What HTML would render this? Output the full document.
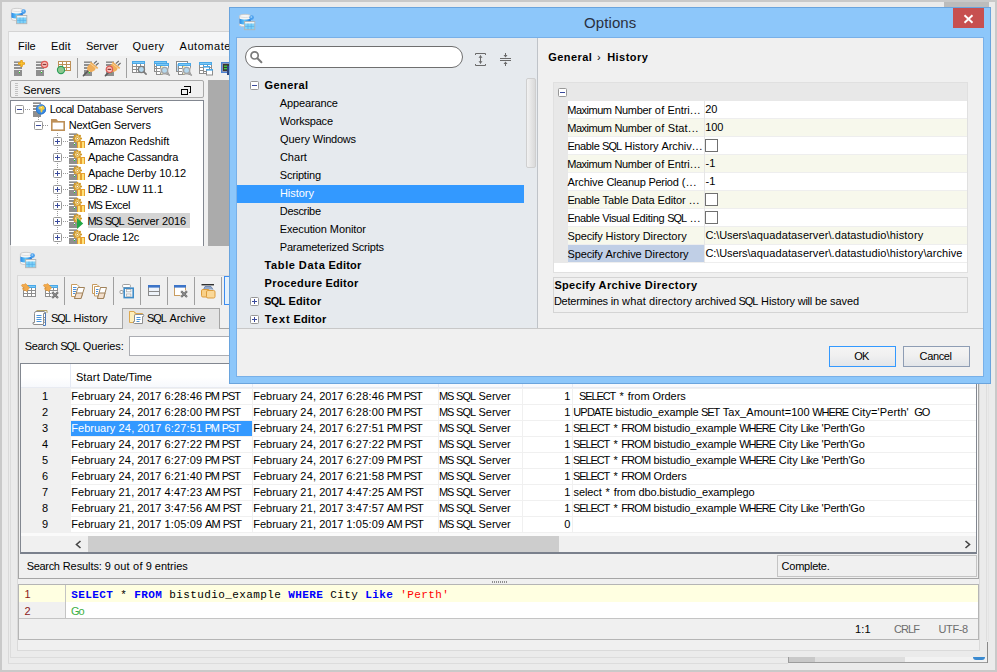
<!DOCTYPE html>
<html lang="en"><head><meta charset="utf-8"><title>Options</title>
<style>
html,body{margin:0;padding:0;background:#ebebeb}
body{width:997px;height:672px;overflow:hidden;position:relative;font-family:"Liberation Sans",sans-serif;font-size:11px;color:#000}
#r{position:absolute;left:0;top:0;width:997px;height:672px;overflow:hidden}
#r div,#r span,#r svg{position:absolute;display:block}
#r svg{overflow:visible}
#r span{white-space:pre;line-height:16px;font-size:11px;letter-spacing:-0.06px}
#r span i{position:static;display:inline}
#r span.b{font-weight:bold;font-size:11px;letter-spacing:-0.06px}
#r span.m{font-family:"Liberation Mono",monospace;font-size:11px;letter-spacing:0.4px}
#r span i{font-style:normal}
</style></head>
<body><div id="r">
<div style="left:0px;top:0px;width:997px;height:672px;background:#ebebeb"></div>
<div style="left:0px;top:0px;width:997px;height:2px;background:#c9c9c9"></div>
<div style="left:0px;top:0px;width:2px;height:672px;background:#c9c9c9"></div>
<div style="left:995px;top:0px;width:2px;height:672px;background:#c9c9c9"></div>
<div style="left:0px;top:670px;width:997px;height:2px;background:#c9c9c9"></div>
<div style="left:944px;top:2px;width:45px;height:6px;background:#bcbcbc"></div>
<svg style="left:11px;top:8px;" width="16" height="16" viewBox="0 0 16 16"><defs><linearGradient id="gA" x1="0" x2="1"><stop offset="0" stop-color="#2d8ae6"/><stop offset=".45" stop-color="#62c8fa"/><stop offset="1" stop-color="#1c74da"/></linearGradient></defs><path d="M.4 2C.4 -.2 11.8 -.2 11.8 2V11C11.8 13.2 .4 13.2 .4 11Z" fill="#f6f6f6" stroke="#c4c4c4" stroke-width=".8"/><path d="M.4 2C.4 4 11.8 4 11.8 2" fill="none" stroke="#d0d0d0" stroke-width=".6"/><path d="M.4 4.4C3 5.8 9 5.8 11.8 4.4V9.4C9 10.8 3 10.8 .4 9.4Z" fill="url(#gA)"/><circle cx="12.6" cy="3.6" r="2.3" fill="#4a9fee"/><circle cx="12.3" cy="3" r="1" fill="#8fcaf8"/><rect x="5.6" y="7.5" width="10.2" height="8.2" fill="#7fd2f8" stroke="#b4b4b4" stroke-width=".9"/><rect x="6.1" y="8" width="9.2" height="1.5" fill="#f4f4f4"/><path d="M9 9.6V15.2M12.2 9.6V15.2M6.1 12.4H15.3" stroke="#58aee8" stroke-width=".7" fill="none"/></svg>
<div style="left:8px;top:31px;width:222px;height:1px;background:#d4d4d4"></div>
<div style="left:8px;top:31px;width:1px;height:633px;background:#d9d9d9"></div>
<div style="left:9px;top:32px;width:221px;height:24px;background:#f5f6f7"></div>
<span style="left:18px;top:38px;letter-spacing:0.00px;">File</span>
<span style="left:51px;top:38px;letter-spacing:0.20px;">Edit</span>
<span style="left:86px;top:38px;letter-spacing:-0.11px;">Server</span>
<span style="left:132.5px;top:38px;letter-spacing:0.41px;">Query</span>
<span style="left:179.5px;top:38px;letter-spacing:0.55px;">Automate</span>
<div style="left:9px;top:56px;width:221px;height:24px;background:#f0f0f0"></div>
<svg style="left:13px;top:60px;" width="16" height="16" viewBox="0 0 16 16"><g shape-rendering="crispEdges"><rect x="1" y="1" width="8" height="2" fill="#8f8f8f"/><rect x="1" y="1" width="8" height="1" fill="#b4b4b4"/><rect x="1" y="4" width="8" height="2" fill="#8f8f8f"/><rect x="1" y="7" width="8" height="2" fill="#8f8f8f"/><rect x="1" y="10" width="8" height="6" fill="#8f8f8f"/><rect x="6" y="11" width="1" height="1" fill="#f4fff4"/><rect x="6" y="12" width="1" height="1" fill="#22d022"/></g><path d="M7.7 .5H9.3V2.7H11.5V4.3H9.3V6.5H7.7V4.3H5.5V2.7H7.7Z" fill="#fdc830" stroke="#e6a11e" stroke-width="1"/></svg>
<svg style="left:35px;top:60px;" width="16" height="16" viewBox="0 0 16 16"><g shape-rendering="crispEdges"><rect x="1" y="1" width="8" height="2" fill="#8f8f8f"/><rect x="1" y="1" width="8" height="1" fill="#b4b4b4"/><rect x="1" y="4" width="8" height="2" fill="#8f8f8f"/><rect x="1" y="7" width="8" height="2" fill="#8f8f8f"/><rect x="1" y="10" width="8" height="6" fill="#8f8f8f"/><rect x="6" y="11" width="1" height="1" fill="#f4fff4"/><rect x="6" y="12" width="1" height="1" fill="#22d022"/></g><circle cx="9.5" cy="4.5" r="3.2" fill="#f9bdb8" stroke="#dc5a55" stroke-width="1.2"/><rect x="7.7" y="3.9" width="3.6" height="1.2" fill="#8a3a36"/></svg>
<svg style="left:57px;top:60px;" width="16" height="16" viewBox="0 0 16 16"><rect x="1.5" y="1.5" width="12" height="9" fill="#fff" stroke="#bd9058" stroke-width="1"/><path d="M1.5 4.5H13.5M1.5 7.5H13.5M5.5 1.5V10.5M9.5 1.5V10.5" stroke="#bd9058" stroke-width="1" fill="none"/><circle cx="4" cy="10" r="3.6" fill="#8cc68e" stroke="#2a9e58" stroke-width="1.1"/></svg>
<svg style="left:83px;top:60px;" width="16" height="16" viewBox="0 0 16 16"><g shape-rendering="crispEdges"><rect x="1" y="1" width="8" height="2" fill="#8f8f8f"/><rect x="1" y="1" width="8" height="1" fill="#b4b4b4"/><rect x="1" y="4" width="8" height="2" fill="#8f8f8f"/><rect x="1" y="7" width="8" height="2" fill="#8f8f8f"/><rect x="1" y="10" width="8" height="6" fill="#8f8f8f"/><rect x="6" y="11" width="1" height="1" fill="#f4fff4"/><rect x="6" y="12" width="1" height="1" fill="#22d022"/></g><path d="M.4 15.6L5.2 10.8" stroke="#5a5a5a" stroke-width="1.5" stroke-linecap="round"/><path d="M10.8 3.6L13.8 1M12.7 5.5L15.6 3" stroke="#6a6a6a" stroke-width="1.2"/><path d="M7.6 3.4L12.8 7.6Q12.6 10.8 9.2 11.8Q5.6 12.6 4.2 9.6Q3.2 6.2 7.6 3.4Z" fill="#f0ae5a"/><path d="M7.3 2.3L14.7 8.3" stroke="#f0ae5a" stroke-width="1.7"/><path d="M7.2 3.5L13.2 8.4" stroke="#f9dcae" stroke-width=".7"/><rect x="5.8" y="12" width="1.2" height="1.2" fill="#22d022"/></svg>
<svg style="left:105px;top:60px;" width="16" height="16" viewBox="0 0 16 16"><g shape-rendering="crispEdges"><rect x="1" y="1" width="8" height="2" fill="#8f8f8f"/><rect x="1" y="1" width="8" height="1" fill="#b4b4b4"/><rect x="1" y="4" width="8" height="2" fill="#8f8f8f"/><rect x="1" y="7" width="8" height="2" fill="#8f8f8f"/><rect x="1" y="10" width="8" height="6" fill="#8f8f8f"/><rect x="6" y="11" width="1" height="1" fill="#f4fff4"/><rect x="6" y="12" width="1" height="1" fill="#22d022"/></g><path d="M.4 15.6L5.2 10.8" stroke="#5a5a5a" stroke-width="1.5" stroke-linecap="round"/><path d="M10.8 3.6L13.8 1M12.7 5.5L15.6 3" stroke="#6a6a6a" stroke-width="1.2"/><path d="M7.6 3.4L12.8 7.6Q12.6 10.8 9.2 11.8Q5.6 12.6 4.2 9.6Q3.2 6.2 7.6 3.4Z" fill="#f0ae5a"/><path d="M7.3 2.3L14.7 8.3" stroke="#f0ae5a" stroke-width="1.7"/><path d="M7.2 3.5L13.2 8.4" stroke="#f9dcae" stroke-width=".7"/><rect x="5.8" y="12" width="1.2" height="1.2" fill="#22d022"/><circle cx="4.4" cy="9.4" r="3.2" fill="#f9bdb8" stroke="#dc5a55" stroke-width="1.2"/><rect x="2.6000000000000005" y="8.8" width="3.6" height="1.2" fill="#8a3a36"/></svg>
<svg style="left:131px;top:60px;" width="16" height="16" viewBox="0 0 16 16"><g shape-rendering="crispEdges"><rect x="1" y="1" width="13" height="12" fill="#8e8e8e"/><rect x="1" y="1" width="13" height="3" fill="#4aa8e8"/><rect x="2" y="2" width="11" height="1" fill="#7cc8f4"/><rect x="2.00" y="4.00" width="3.00" height="2.00" fill="#fff"/><rect x="6.00" y="4.00" width="3.00" height="2.00" fill="#fff"/><rect x="10.00" y="4.00" width="3.00" height="2.00" fill="#fff"/><rect x="2.00" y="7.00" width="3.00" height="2.00" fill="#fff"/><rect x="6.00" y="7.00" width="3.00" height="2.00" fill="#fff"/><rect x="10.00" y="7.00" width="3.00" height="2.00" fill="#fff"/><rect x="2.00" y="10.00" width="3.00" height="2.00" fill="#fff"/><rect x="6.00" y="10.00" width="3.00" height="2.00" fill="#fff"/><rect x="10.00" y="10.00" width="3.00" height="2.00" fill="#fff"/></g><path d="M12.8 11.9L15.100000000000001 14.2" stroke="#7c7c7c" stroke-width="1.7" stroke-linecap="round"/><circle cx="10.4" cy="9.5" r="3.1" fill="#b4d8ee" stroke="#7c7c7c" stroke-width="1.3"/></svg>
<svg style="left:153px;top:60px;" width="16" height="16" viewBox="0 0 16 16"><g shape-rendering="crispEdges"><rect x="1" y="1" width="13" height="11" fill="#8e8e8e"/><rect x="1" y="1" width="13" height="3" fill="#4aa8e8"/><rect x="2" y="2" width="11" height="1" fill="#7cc8f4"/><rect x="2.00" y="4.00" width="3.00" height="1.67" fill="#fff"/><rect x="6.00" y="4.00" width="3.00" height="1.67" fill="#fff"/><rect x="10.00" y="4.00" width="3.00" height="1.67" fill="#fff"/><rect x="2.00" y="6.67" width="3.00" height="1.67" fill="#fff"/><rect x="6.00" y="6.67" width="3.00" height="1.67" fill="#fff"/><rect x="10.00" y="6.67" width="3.00" height="1.67" fill="#fff"/><rect x="2.00" y="9.33" width="3.00" height="1.67" fill="#fff"/><rect x="6.00" y="9.33" width="3.00" height="1.67" fill="#fff"/><rect x="10.00" y="9.33" width="3.00" height="1.67" fill="#fff"/></g><g shape-rendering="crispEdges"><rect x="3" y="3" width="13" height="12" fill="#8e8e8e"/><rect x="3" y="3" width="13" height="3" fill="#4aa8e8"/><rect x="4" y="4" width="11" height="1" fill="#7cc8f4"/><rect x="4.00" y="6.00" width="3.00" height="2.00" fill="#fff"/><rect x="8.00" y="6.00" width="3.00" height="2.00" fill="#fff"/><rect x="12.00" y="6.00" width="3.00" height="2.00" fill="#fff"/><rect x="4.00" y="9.00" width="3.00" height="2.00" fill="#fff"/><rect x="8.00" y="9.00" width="3.00" height="2.00" fill="#fff"/><rect x="12.00" y="9.00" width="3.00" height="2.00" fill="#fff"/><rect x="4.00" y="12.00" width="3.00" height="2.00" fill="#fff"/><rect x="8.00" y="12.00" width="3.00" height="2.00" fill="#fff"/><rect x="12.00" y="12.00" width="3.00" height="2.00" fill="#fff"/></g><rect x="8" y="6" width="3" height="2" fill="#fbe87a"/><rect x="8" y="13" width="1.2" height="1.2" fill="#fbe87a"/><circle cx="11.6" cy="10.4" r="4.4" fill="#f6f6f6"/><path d="M14.0 12.8L16.3 15.100000000000001" stroke="#a4a4a4" stroke-width="1.7" stroke-linecap="round"/><circle cx="11.6" cy="10.4" r="3.1" fill="#b4d8ee" stroke="#a4a4a4" stroke-width="1.3"/></svg>
<svg style="left:175px;top:60px;" width="16" height="16" viewBox="0 0 16 16"><rect x="1.5" y="1.5" width="11" height="10" fill="#fff" stroke="#8c8c8c" stroke-width="1"/><rect x="2" y="4" width="1.6" height="7" fill="#b4d8f4"/><g shape-rendering="crispEdges"><rect x="3" y="3" width="13" height="12" fill="#8e8e8e"/><rect x="3" y="3" width="13" height="3" fill="#4aa8e8"/><rect x="4" y="4" width="11" height="1" fill="#7cc8f4"/><rect x="4.00" y="6.00" width="3.00" height="2.00" fill="#fff"/><rect x="8.00" y="6.00" width="3.00" height="2.00" fill="#fff"/><rect x="12.00" y="6.00" width="3.00" height="2.00" fill="#fff"/><rect x="4.00" y="9.00" width="3.00" height="2.00" fill="#fff"/><rect x="8.00" y="9.00" width="3.00" height="2.00" fill="#fff"/><rect x="12.00" y="9.00" width="3.00" height="2.00" fill="#fff"/><rect x="4.00" y="12.00" width="3.00" height="2.00" fill="#fff"/><rect x="8.00" y="12.00" width="3.00" height="2.00" fill="#fff"/><rect x="12.00" y="12.00" width="3.00" height="2.00" fill="#fff"/></g><rect x="8" y="6" width="3" height="2" fill="#fbe87a"/><rect x="8" y="13" width="1.2" height="1.2" fill="#fbe87a"/><circle cx="11.6" cy="10.4" r="4.4" fill="#f6f6f6"/><path d="M14.0 12.8L16.3 15.100000000000001" stroke="#a4a4a4" stroke-width="1.7" stroke-linecap="round"/><circle cx="11.6" cy="10.4" r="3.1" fill="#b4d8ee" stroke="#a4a4a4" stroke-width="1.3"/></svg>
<svg style="left:198px;top:60px;" width="16" height="16" viewBox="0 0 16 16"><g shape-rendering="crispEdges"><rect x="1" y="2" width="13" height="12" fill="#8e8e8e"/><rect x="1" y="2" width="13" height="3" fill="#4aa8e8"/><rect x="2" y="3" width="11" height="1" fill="#7cc8f4"/><rect x="2.00" y="5.00" width="3.00" height="2.00" fill="#fff"/><rect x="6.00" y="5.00" width="3.00" height="2.00" fill="#fff"/><rect x="10.00" y="5.00" width="3.00" height="2.00" fill="#fff"/><rect x="2.00" y="8.00" width="3.00" height="2.00" fill="#fff"/><rect x="6.00" y="8.00" width="3.00" height="2.00" fill="#fff"/><rect x="10.00" y="8.00" width="3.00" height="2.00" fill="#fff"/><rect x="2.00" y="11.00" width="3.00" height="2.00" fill="#fff"/><rect x="6.00" y="11.00" width="3.00" height="2.00" fill="#fff"/><rect x="10.00" y="11.00" width="3.00" height="2.00" fill="#fff"/></g><rect x="5.5" y="6.5" width="6" height="5" fill="#fff" stroke="#8c8c8c" stroke-width="1"/><rect x="5" y="6" width="7" height="1.6" fill="#4aa8e8"/><rect x="8.5" y="9.5" width="6" height="5.5" fill="#fff" stroke="#8c8c8c" stroke-width="1"/><rect x="8" y="9" width="7" height="1.6" fill="#4aa8e8"/></svg>
<svg style="left:220px;top:60px;" width="16" height="16" viewBox="0 0 16 16"><rect x="1" y="2" width="14" height="11" fill="#4c82d4"/><rect x="2.2" y="3.2" width="11.6" height="8.6" fill="#9a9aa8"/><rect x="3" y="4" width="10" height="7" fill="#3a3434"/><rect x="4" y="5.6" width="3.4" height="1.3" fill="#3ed23e"/><rect x="4" y="8" width="3.4" height="1.3" fill="#3ed23e"/><rect x="7" y="6" width="8" height="9" fill="#2c4680"/></svg>
<div style="left:77px;top:58px;width:1px;height:20px;background:#a0a0a0"></div>
<div style="left:126px;top:58px;width:1px;height:20px;background:#a0a0a0"></div>
<div style="left:10px;top:80px;width:194px;height:18px;background:#f0f0f0;border:1px solid #a9a9a9;border-radius:2px;box-sizing:border-box"></div>
<div style="left:15px;top:83px;width:3px;height:1px;background:#c2c2c2"></div>
<div style="left:15px;top:85px;width:3px;height:1px;background:#c2c2c2"></div>
<div style="left:15px;top:87px;width:3px;height:1px;background:#c2c2c2"></div>
<div style="left:15px;top:89px;width:3px;height:1px;background:#c2c2c2"></div>
<div style="left:15px;top:91px;width:3px;height:1px;background:#c2c2c2"></div>
<div style="left:15px;top:93px;width:3px;height:1px;background:#c2c2c2"></div>
<div style="left:15px;top:95px;width:3px;height:1px;background:#c2c2c2"></div>
<span style="left:23.3px;top:82px;"><i style="letter-spacing:-0.13px;margin:0 0.06px 0 -0.06px">Servers</i></span>
<svg style="left:180px;top:85px" width="12" height="11" viewBox="0 0 12 11" shape-rendering="crispEdges"><path d="M4 1.5H10.5V7.5H8.5" fill="none" stroke="#000" stroke-width="1"/><rect x="1.5" y="4.5" width="6" height="5" fill="#f0f0f0" stroke="#000" stroke-width="1"/><rect x="1" y="4" width="7" height="1" fill="#000"/></svg>
<div style="left:10px;top:100px;width:194px;height:146px;background:#fff;border:1px solid #828790;border-bottom:none;box-sizing:border-box"></div>
<div style="left:204px;top:80px;width:4px;height:166px;background:#f0f0f0"></div>
<div style="left:208px;top:80px;width:22px;height:166px;background:#ababab"></div>
<div style="left:57px;top:133px;width:1px;height:112px;background-image:linear-gradient(#9a9a9a 50%,transparent 50%);background-size:1px 2px"></div>
<div style="left:25px;top:109px;width:6px;height:1px;background-image:linear-gradient(90deg,#9a9a9a 50%,transparent 50%);background-size:2px 1px"></div>
<div style="left:43px;top:125px;width:6px;height:1px;background-image:linear-gradient(90deg,#9a9a9a 50%,transparent 50%);background-size:2px 1px"></div>
<div style="left:38px;top:117px;width:1px;height:4px;background-image:linear-gradient(#9a9a9a 50%,transparent 50%);background-size:1px 2px"></div>
<svg style="left:15px;top:105px" width="9" height="9" viewBox="0 0 9 9"><rect x=".5" y=".5" width="8" height="8" rx="1" fill="#fff" stroke="#979797"/><path d="M2 4.5H7" stroke="#3a4a9c" stroke-width="1"/></svg>
<svg style="left:32px;top:101px;" width="16" height="16" viewBox="0 0 16 16"><g shape-rendering="crispEdges"><rect x="1" y="1" width="8" height="2" fill="#8f8f8f"/><rect x="1" y="1" width="8" height="1" fill="#b4b4b4"/><rect x="1" y="4" width="8" height="2" fill="#8f8f8f"/><rect x="1" y="7" width="8" height="2" fill="#8f8f8f"/><rect x="1" y="10" width="8" height="6" fill="#8f8f8f"/><rect x="6" y="11" width="1" height="1" fill="#f4fff4"/><rect x="6" y="12" width="1" height="1" fill="#22d022"/></g><circle cx="9" cy="8.4" r="5" fill="#3c8ee4"/><circle cx="9" cy="8.4" r="4.6" fill="none" stroke="#2a6cc4" stroke-width=".8"/><circle cx="7.6" cy="6.4" r="2.2" fill="#6cb4f4" opacity=".7"/><path d="M6.4 6.8L7.8 5.2L9 5.8L10 4.6L12 5.6L12.8 7.4L11.6 8.8L10.8 8.4L10.4 10.4L9.2 11.8L8.4 10L8.8 8.6L7.2 8.2Z" fill="#f6cc3a"/><path d="M8.2 6.2L9.6 6L10.2 7L9 7.2Z" fill="#fff3b0"/></svg>
<span style="left:50px;top:101px;"><i style="letter-spacing:-0.46px;margin:0 0.23px 0 -0.23px">Local</i> <i style="letter-spacing:-0.14px;margin:0 0.07px 0 -0.07px">Database</i> <i style="letter-spacing:-0.13px;margin:0 0.06px 0 -0.06px">Servers</i></span>
<svg style="left:34px;top:121px" width="9" height="9" viewBox="0 0 9 9"><rect x=".5" y=".5" width="8" height="8" rx="1" fill="#fff" stroke="#979797"/><path d="M2 4.5H7" stroke="#3a4a9c" stroke-width="1"/></svg>
<svg style="left:50px;top:116px;" width="16" height="16" viewBox="0 0 16 16"><path d="M1 3H6.4L8 5H15V15H1Z" fill="#bd9058"/><rect x="2.6" y="6.6" width="10.8" height="6.8" fill="#fff"/></svg>
<span style="left:68.8px;top:117px;"><i style="letter-spacing:-0.20px;margin:0 0.10px 0 -0.10px">NextGen</i> <i style="letter-spacing:-0.13px;margin:0 0.06px 0 -0.06px">Servers</i></span>
<svg style="left:53px;top:137px" width="9" height="9" viewBox="0 0 9 9"><rect x=".5" y=".5" width="8" height="8" rx="1" fill="#fff" stroke="#979797"/><path d="M2 4.5H7M4.5 2V7" stroke="#3a4a9c" stroke-width="1"/></svg>
<div style="left:63px;top:141px;width:6px;height:1px;background-image:linear-gradient(90deg,#9a9a9a 50%,transparent 50%);background-size:2px 1px"></div>
<svg style="left:68px;top:133px;" width="17" height="16" viewBox="0 0 17 16"><g shape-rendering="crispEdges"><rect x="1" y="0" width="8" height="2" fill="#8f8f8f"/><rect x="1" y="0" width="8" height="1" fill="#b4b4b4"/><rect x="1" y="3" width="8" height="2" fill="#8f8f8f"/><rect x="1" y="6" width="8" height="2" fill="#8f8f8f"/><rect x="1" y="9" width="8" height="6" fill="#8f8f8f"/><rect x="6" y="10" width="1" height="1" fill="#f4fff4"/><rect x="6" y="11" width="1" height="1" fill="#22d022"/></g><circle cx="13.00" cy="5.50" r="1.1" fill="#d29a2a"/><circle cx="11.95" cy="8.05" r="1.1" fill="#d29a2a"/><circle cx="9.40" cy="9.10" r="1.1" fill="#d29a2a"/><circle cx="6.85" cy="8.05" r="1.1" fill="#d29a2a"/><circle cx="5.80" cy="5.50" r="1.1" fill="#d29a2a"/><circle cx="6.85" cy="2.95" r="1.1" fill="#d29a2a"/><circle cx="9.40" cy="1.90" r="1.1" fill="#d29a2a"/><circle cx="11.95" cy="2.95" r="1.1" fill="#d29a2a"/><circle cx="9.4" cy="5.5" r="3.3" fill="#d29a2a"/><circle cx="9.4" cy="5.5" r="2.2" fill="#fbe9b0"/><circle cx="9.4" cy="5.5" r="1.45" fill="#d29a2a"/><circle cx="9.4" cy="5.5" r=".75" fill="#fff"/><g shape-rendering="crispEdges"><rect x="9" y="8" width="4" height="7" fill="#e6a030"/><rect x="10" y="9" width="2" height="6" fill="#ffe27a"/><rect x="13" y="8" width="4" height="7" fill="#e6a030"/><rect x="14" y="9" width="2" height="6" fill="#ffe27a"/></g></svg>
<span style="left:88.2px;top:133px;"><i style="letter-spacing:-0.39px;margin:0 0.20px 0 -0.20px">Amazon</i> <i style="letter-spacing:-0.04px;margin:0 0.02px 0 -0.02px">Redshift</i></span>
<svg style="left:53px;top:153px" width="9" height="9" viewBox="0 0 9 9"><rect x=".5" y=".5" width="8" height="8" rx="1" fill="#fff" stroke="#979797"/><path d="M2 4.5H7M4.5 2V7" stroke="#3a4a9c" stroke-width="1"/></svg>
<div style="left:63px;top:157px;width:6px;height:1px;background-image:linear-gradient(90deg,#9a9a9a 50%,transparent 50%);background-size:2px 1px"></div>
<svg style="left:68px;top:149px;" width="17" height="16" viewBox="0 0 17 16"><g shape-rendering="crispEdges"><rect x="1" y="0" width="8" height="2" fill="#8f8f8f"/><rect x="1" y="0" width="8" height="1" fill="#b4b4b4"/><rect x="1" y="3" width="8" height="2" fill="#8f8f8f"/><rect x="1" y="6" width="8" height="2" fill="#8f8f8f"/><rect x="1" y="9" width="8" height="6" fill="#8f8f8f"/><rect x="6" y="10" width="1" height="1" fill="#f4fff4"/><rect x="6" y="11" width="1" height="1" fill="#22d022"/></g><circle cx="13.00" cy="5.50" r="1.1" fill="#d29a2a"/><circle cx="11.95" cy="8.05" r="1.1" fill="#d29a2a"/><circle cx="9.40" cy="9.10" r="1.1" fill="#d29a2a"/><circle cx="6.85" cy="8.05" r="1.1" fill="#d29a2a"/><circle cx="5.80" cy="5.50" r="1.1" fill="#d29a2a"/><circle cx="6.85" cy="2.95" r="1.1" fill="#d29a2a"/><circle cx="9.40" cy="1.90" r="1.1" fill="#d29a2a"/><circle cx="11.95" cy="2.95" r="1.1" fill="#d29a2a"/><circle cx="9.4" cy="5.5" r="3.3" fill="#d29a2a"/><circle cx="9.4" cy="5.5" r="2.2" fill="#fbe9b0"/><circle cx="9.4" cy="5.5" r="1.45" fill="#d29a2a"/><circle cx="9.4" cy="5.5" r=".75" fill="#fff"/><g shape-rendering="crispEdges"><rect x="9" y="8" width="4" height="7" fill="#e6a030"/><rect x="10" y="9" width="2" height="6" fill="#ffe27a"/><rect x="13" y="8" width="4" height="7" fill="#e6a030"/><rect x="14" y="9" width="2" height="6" fill="#ffe27a"/></g></svg>
<span style="left:88.2px;top:149px;"><i style="letter-spacing:-0.22px;margin:0 0.11px 0 -0.11px">Apache</i> <i style="letter-spacing:-0.24px;margin:0 0.12px 0 -0.12px">Cassandra</i></span>
<svg style="left:53px;top:169px" width="9" height="9" viewBox="0 0 9 9"><rect x=".5" y=".5" width="8" height="8" rx="1" fill="#fff" stroke="#979797"/><path d="M2 4.5H7M4.5 2V7" stroke="#3a4a9c" stroke-width="1"/></svg>
<div style="left:63px;top:173px;width:6px;height:1px;background-image:linear-gradient(90deg,#9a9a9a 50%,transparent 50%);background-size:2px 1px"></div>
<svg style="left:68px;top:165px;" width="17" height="16" viewBox="0 0 17 16"><g shape-rendering="crispEdges"><rect x="1" y="0" width="8" height="2" fill="#8f8f8f"/><rect x="1" y="0" width="8" height="1" fill="#b4b4b4"/><rect x="1" y="3" width="8" height="2" fill="#8f8f8f"/><rect x="1" y="6" width="8" height="2" fill="#8f8f8f"/><rect x="1" y="9" width="8" height="6" fill="#8f8f8f"/><rect x="6" y="10" width="1" height="1" fill="#f4fff4"/><rect x="6" y="11" width="1" height="1" fill="#22d022"/></g><circle cx="13.00" cy="5.50" r="1.1" fill="#d29a2a"/><circle cx="11.95" cy="8.05" r="1.1" fill="#d29a2a"/><circle cx="9.40" cy="9.10" r="1.1" fill="#d29a2a"/><circle cx="6.85" cy="8.05" r="1.1" fill="#d29a2a"/><circle cx="5.80" cy="5.50" r="1.1" fill="#d29a2a"/><circle cx="6.85" cy="2.95" r="1.1" fill="#d29a2a"/><circle cx="9.40" cy="1.90" r="1.1" fill="#d29a2a"/><circle cx="11.95" cy="2.95" r="1.1" fill="#d29a2a"/><circle cx="9.4" cy="5.5" r="3.3" fill="#d29a2a"/><circle cx="9.4" cy="5.5" r="2.2" fill="#fbe9b0"/><circle cx="9.4" cy="5.5" r="1.45" fill="#d29a2a"/><circle cx="9.4" cy="5.5" r=".75" fill="#fff"/><g shape-rendering="crispEdges"><rect x="9" y="8" width="4" height="7" fill="#e6a030"/><rect x="10" y="9" width="2" height="6" fill="#ffe27a"/><rect x="13" y="8" width="4" height="7" fill="#e6a030"/><rect x="14" y="9" width="2" height="6" fill="#ffe27a"/></g></svg>
<span style="left:88.2px;top:165px;"><i style="letter-spacing:-0.22px;margin:0 0.11px 0 -0.11px">Apache</i> <i style="letter-spacing:-0.07px;margin:0 0.03px 0 -0.03px">Derby</i> <i style="letter-spacing:-0.11px;margin:0 0.05px 0 -0.05px">10.12</i></span>
<svg style="left:53px;top:185px" width="9" height="9" viewBox="0 0 9 9"><rect x=".5" y=".5" width="8" height="8" rx="1" fill="#fff" stroke="#979797"/><path d="M2 4.5H7M4.5 2V7" stroke="#3a4a9c" stroke-width="1"/></svg>
<div style="left:63px;top:189px;width:6px;height:1px;background-image:linear-gradient(90deg,#9a9a9a 50%,transparent 50%);background-size:2px 1px"></div>
<svg style="left:68px;top:181px;" width="17" height="16" viewBox="0 0 17 16"><g shape-rendering="crispEdges"><rect x="1" y="0" width="8" height="2" fill="#8f8f8f"/><rect x="1" y="0" width="8" height="1" fill="#b4b4b4"/><rect x="1" y="3" width="8" height="2" fill="#8f8f8f"/><rect x="1" y="6" width="8" height="2" fill="#8f8f8f"/><rect x="1" y="9" width="8" height="6" fill="#8f8f8f"/><rect x="6" y="10" width="1" height="1" fill="#f4fff4"/><rect x="6" y="11" width="1" height="1" fill="#22d022"/></g><circle cx="13.00" cy="5.50" r="1.1" fill="#d29a2a"/><circle cx="11.95" cy="8.05" r="1.1" fill="#d29a2a"/><circle cx="9.40" cy="9.10" r="1.1" fill="#d29a2a"/><circle cx="6.85" cy="8.05" r="1.1" fill="#d29a2a"/><circle cx="5.80" cy="5.50" r="1.1" fill="#d29a2a"/><circle cx="6.85" cy="2.95" r="1.1" fill="#d29a2a"/><circle cx="9.40" cy="1.90" r="1.1" fill="#d29a2a"/><circle cx="11.95" cy="2.95" r="1.1" fill="#d29a2a"/><circle cx="9.4" cy="5.5" r="3.3" fill="#d29a2a"/><circle cx="9.4" cy="5.5" r="2.2" fill="#fbe9b0"/><circle cx="9.4" cy="5.5" r="1.45" fill="#d29a2a"/><circle cx="9.4" cy="5.5" r=".75" fill="#fff"/><g shape-rendering="crispEdges"><rect x="9" y="8" width="4" height="7" fill="#e6a030"/><rect x="10" y="9" width="2" height="6" fill="#ffe27a"/><rect x="13" y="8" width="4" height="7" fill="#e6a030"/><rect x="14" y="9" width="2" height="6" fill="#ffe27a"/></g></svg>
<span style="left:88.2px;top:181px;"><i style="letter-spacing:-0.80px;margin:0 0.40px 0 -0.40px">DB2</i> <i style="letter-spacing:0.33px;margin:0 -0.16px 0 0.16px">-</i> <i style="letter-spacing:-0.82px;margin:0 0.41px 0 -0.41px">LUW</i> <i style="letter-spacing:0.10px;margin:0 -0.05px 0 0.05px">11.1</i></span>
<svg style="left:53px;top:201px" width="9" height="9" viewBox="0 0 9 9"><rect x=".5" y=".5" width="8" height="8" rx="1" fill="#fff" stroke="#979797"/><path d="M2 4.5H7M4.5 2V7" stroke="#3a4a9c" stroke-width="1"/></svg>
<div style="left:63px;top:205px;width:6px;height:1px;background-image:linear-gradient(90deg,#9a9a9a 50%,transparent 50%);background-size:2px 1px"></div>
<svg style="left:68px;top:197px;" width="17" height="16" viewBox="0 0 17 16"><g shape-rendering="crispEdges"><rect x="1" y="0" width="8" height="2" fill="#8f8f8f"/><rect x="1" y="0" width="8" height="1" fill="#b4b4b4"/><rect x="1" y="3" width="8" height="2" fill="#8f8f8f"/><rect x="1" y="6" width="8" height="2" fill="#8f8f8f"/><rect x="1" y="9" width="8" height="6" fill="#8f8f8f"/><rect x="6" y="10" width="1" height="1" fill="#f4fff4"/><rect x="6" y="11" width="1" height="1" fill="#22d022"/></g><circle cx="13.00" cy="5.50" r="1.1" fill="#d29a2a"/><circle cx="11.95" cy="8.05" r="1.1" fill="#d29a2a"/><circle cx="9.40" cy="9.10" r="1.1" fill="#d29a2a"/><circle cx="6.85" cy="8.05" r="1.1" fill="#d29a2a"/><circle cx="5.80" cy="5.50" r="1.1" fill="#d29a2a"/><circle cx="6.85" cy="2.95" r="1.1" fill="#d29a2a"/><circle cx="9.40" cy="1.90" r="1.1" fill="#d29a2a"/><circle cx="11.95" cy="2.95" r="1.1" fill="#d29a2a"/><circle cx="9.4" cy="5.5" r="3.3" fill="#d29a2a"/><circle cx="9.4" cy="5.5" r="2.2" fill="#fbe9b0"/><circle cx="9.4" cy="5.5" r="1.45" fill="#d29a2a"/><circle cx="9.4" cy="5.5" r=".75" fill="#fff"/><g shape-rendering="crispEdges"><rect x="9" y="8" width="4" height="7" fill="#e6a030"/><rect x="10" y="9" width="2" height="6" fill="#ffe27a"/><rect x="13" y="8" width="4" height="7" fill="#e6a030"/><rect x="14" y="9" width="2" height="6" fill="#ffe27a"/></g></svg>
<span style="left:88.2px;top:197px;"><i style="letter-spacing:-1.25px;margin:0 0.62px 0 -0.62px">MS</i> <i style="letter-spacing:-0.38px;margin:0 0.19px 0 -0.19px">Excel</i></span>
<svg style="left:53px;top:217px" width="9" height="9" viewBox="0 0 9 9"><rect x=".5" y=".5" width="8" height="8" rx="1" fill="#fff" stroke="#979797"/><path d="M2 4.5H7M4.5 2V7" stroke="#3a4a9c" stroke-width="1"/></svg>
<div style="left:63px;top:221px;width:6px;height:1px;background-image:linear-gradient(90deg,#9a9a9a 50%,transparent 50%);background-size:2px 1px"></div>
<svg style="left:68px;top:213px;" width="17" height="16" viewBox="0 0 17 16"><g shape-rendering="crispEdges"><rect x="1" y="0" width="8" height="2" fill="#8f8f8f"/><rect x="1" y="0" width="8" height="1" fill="#b4b4b4"/><rect x="1" y="3" width="8" height="2" fill="#8f8f8f"/><rect x="1" y="6" width="8" height="2" fill="#8f8f8f"/><rect x="1" y="9" width="8" height="6" fill="#8f8f8f"/><rect x="6" y="10" width="1" height="1" fill="#f4fff4"/><rect x="6" y="11" width="1" height="1" fill="#22d022"/></g><circle cx="13.00" cy="5.50" r="1.1" fill="#d29a2a"/><circle cx="11.95" cy="8.05" r="1.1" fill="#d29a2a"/><circle cx="9.40" cy="9.10" r="1.1" fill="#d29a2a"/><circle cx="6.85" cy="8.05" r="1.1" fill="#d29a2a"/><circle cx="5.80" cy="5.50" r="1.1" fill="#d29a2a"/><circle cx="6.85" cy="2.95" r="1.1" fill="#d29a2a"/><circle cx="9.40" cy="1.90" r="1.1" fill="#d29a2a"/><circle cx="11.95" cy="2.95" r="1.1" fill="#d29a2a"/><circle cx="9.4" cy="5.5" r="3.3" fill="#d29a2a"/><circle cx="9.4" cy="5.5" r="2.2" fill="#fbe9b0"/><circle cx="9.4" cy="5.5" r="1.45" fill="#d29a2a"/><circle cx="9.4" cy="5.5" r=".75" fill="#fff"/><path d="M9 5L15.2 10.6L9 16Z" fill="#22a846"/></svg>
<div style="left:88px;top:213px;width:102px;height:15px;background:#d4d4d4"></div>
<span style="left:88.2px;top:213px;"><i style="letter-spacing:-1.25px;margin:0 0.62px 0 -0.62px">MS</i> <i style="letter-spacing:-1.01px;margin:0 0.50px 0 -0.50px">SQL</i> <i style="letter-spacing:-0.07px;margin:0 0.03px 0 -0.03px">Server</i> <i style="letter-spacing:-0.12px;margin:0 0.06px 0 -0.06px">2016</i></span>
<svg style="left:53px;top:233px" width="9" height="9" viewBox="0 0 9 9"><rect x=".5" y=".5" width="8" height="8" rx="1" fill="#fff" stroke="#979797"/><path d="M2 4.5H7M4.5 2V7" stroke="#3a4a9c" stroke-width="1"/></svg>
<div style="left:63px;top:237px;width:6px;height:1px;background-image:linear-gradient(90deg,#9a9a9a 50%,transparent 50%);background-size:2px 1px"></div>
<svg style="left:68px;top:229px;" width="17" height="16" viewBox="0 0 17 16"><g shape-rendering="crispEdges"><rect x="1" y="0" width="8" height="2" fill="#8f8f8f"/><rect x="1" y="0" width="8" height="1" fill="#b4b4b4"/><rect x="1" y="3" width="8" height="2" fill="#8f8f8f"/><rect x="1" y="6" width="8" height="2" fill="#8f8f8f"/><rect x="1" y="9" width="8" height="6" fill="#8f8f8f"/><rect x="6" y="10" width="1" height="1" fill="#f4fff4"/><rect x="6" y="11" width="1" height="1" fill="#22d022"/></g><circle cx="13.00" cy="5.50" r="1.1" fill="#d29a2a"/><circle cx="11.95" cy="8.05" r="1.1" fill="#d29a2a"/><circle cx="9.40" cy="9.10" r="1.1" fill="#d29a2a"/><circle cx="6.85" cy="8.05" r="1.1" fill="#d29a2a"/><circle cx="5.80" cy="5.50" r="1.1" fill="#d29a2a"/><circle cx="6.85" cy="2.95" r="1.1" fill="#d29a2a"/><circle cx="9.40" cy="1.90" r="1.1" fill="#d29a2a"/><circle cx="11.95" cy="2.95" r="1.1" fill="#d29a2a"/><circle cx="9.4" cy="5.5" r="3.3" fill="#d29a2a"/><circle cx="9.4" cy="5.5" r="2.2" fill="#fbe9b0"/><circle cx="9.4" cy="5.5" r="1.45" fill="#d29a2a"/><circle cx="9.4" cy="5.5" r=".75" fill="#fff"/><g shape-rendering="crispEdges"><rect x="9" y="8" width="4" height="7" fill="#e6a030"/><rect x="10" y="9" width="2" height="6" fill="#ffe27a"/><rect x="13" y="8" width="4" height="7" fill="#e6a030"/><rect x="14" y="9" width="2" height="6" fill="#ffe27a"/></g></svg>
<span style="left:88.2px;top:229px;"><i style="letter-spacing:-0.23px;margin:0 0.12px 0 -0.12px">Oracle</i> <i style="letter-spacing:-0.25px;margin:0 0.12px 0 -0.12px">12c</i></span>
<div style="left:8px;top:663px;width:780px;height:1px;background:#dcdcdc"></div>
<div style="left:788px;top:657px;width:200px;height:5px;background:#f2f2f2"></div>
<div style="left:788px;top:657px;width:27px;height:5px;background:#c8c8c8"></div>
<div style="left:815px;top:657px;width:90px;height:5px;background:#dedede"></div>
<div style="left:788px;top:662px;width:200px;height:1px;background:#9c9c9c"></div>
<div style="left:788px;top:657px;width:1px;height:5px;background:#9c9c9c"></div>
<div style="left:973px;top:657px;width:12px;height:3px;background:#3a8ad0;border-radius:0 0 5px 5px"></div>
<div style="left:987px;top:642px;width:1px;height:21px;background:#8a8a8a"></div>
<div style="left:986px;top:245px;width:1px;height:396px;background:#dedede"></div>
<div style="left:988px;top:245px;width:1px;height:396px;background:#e4e4e4"></div>
<div style="left:10px;top:245px;width:1px;height:413px;background:#dcdcdc"></div>
<div style="left:10px;top:657px;width:778px;height:1px;background:#dcdcdc"></div>
<svg style="left:20px;top:252px;" width="16" height="16" viewBox="0 0 16 16"><defs><linearGradient id="gB" x1="0" x2="1"><stop offset="0" stop-color="#2d8ae6"/><stop offset=".45" stop-color="#62c8fa"/><stop offset="1" stop-color="#1c74da"/></linearGradient></defs><path d="M.4 2C.4 -.2 11.8 -.2 11.8 2V11C11.8 13.2 .4 13.2 .4 11Z" fill="#f6f6f6" stroke="#c4c4c4" stroke-width=".8"/><path d="M.4 2C.4 4 11.8 4 11.8 2" fill="none" stroke="#d0d0d0" stroke-width=".6"/><path d="M.4 4.4C3 5.8 9 5.8 11.8 4.4V9.4C9 10.8 3 10.8 .4 9.4Z" fill="url(#gB)"/><circle cx="12.6" cy="3.6" r="2.3" fill="#4a9fee"/><circle cx="12.3" cy="3" r="1" fill="#8fcaf8"/><rect x="5.6" y="7.5" width="10.2" height="8.2" fill="#7fd2f8" stroke="#b4b4b4" stroke-width=".9"/><rect x="6.1" y="8" width="9.2" height="1.5" fill="#f4f4f4"/><path d="M9 9.6V15.2M12.2 9.6V15.2M6.1 12.4H15.3" stroke="#58aee8" stroke-width=".7" fill="none"/></svg>
<div style="left:17px;top:275px;width:963px;height:376px;background:#f0f0f0;border:1px solid #dadada;box-sizing:border-box"></div>
<svg style="left:21px;top:283px;" width="16" height="16" viewBox="0 0 16 16"><g shape-rendering="crispEdges"><rect x="2" y="2" width="13" height="12" fill="#8e8e8e"/><rect x="2" y="2" width="13" height="3" fill="#4aa8e8"/><rect x="3" y="3" width="11" height="1" fill="#7cc8f4"/><rect x="3.00" y="5.00" width="3.00" height="2.00" fill="#fff"/><rect x="7.00" y="5.00" width="3.00" height="2.00" fill="#fff"/><rect x="11.00" y="5.00" width="3.00" height="2.00" fill="#fff"/><rect x="3.00" y="8.00" width="3.00" height="2.00" fill="#fff"/><rect x="7.00" y="8.00" width="3.00" height="2.00" fill="#fff"/><rect x="11.00" y="8.00" width="3.00" height="2.00" fill="#fff"/><rect x="3.00" y="11.00" width="3.00" height="2.00" fill="#fff"/><rect x="7.00" y="11.00" width="3.00" height="2.00" fill="#fff"/><rect x="11.00" y="11.00" width="3.00" height="2.00" fill="#fff"/></g><path d="M0.4 2.4Q1 .8 3 1.6L4.6 .6L8.6 4.8L5.6 8.6L4.4 7.4Q2 8 1.4 5.4Q3 5.6 3.4 5Q1.4 4.4 .4 2.4Z" fill="#f2aa4c" stroke="#dc8c2c" stroke-width=".5"/></svg>
<svg style="left:43px;top:283px;" width="16" height="16" viewBox="0 0 16 16"><g shape-rendering="crispEdges"><rect x="2" y="2" width="13" height="12" fill="#8e8e8e"/><rect x="2" y="2" width="13" height="3" fill="#4aa8e8"/><rect x="3" y="3" width="11" height="1" fill="#7cc8f4"/><rect x="3.00" y="5.00" width="3.00" height="2.00" fill="#fff"/><rect x="7.00" y="5.00" width="3.00" height="2.00" fill="#fff"/><rect x="11.00" y="5.00" width="3.00" height="2.00" fill="#fff"/><rect x="3.00" y="8.00" width="3.00" height="2.00" fill="#fff"/><rect x="7.00" y="8.00" width="3.00" height="2.00" fill="#fff"/><rect x="11.00" y="8.00" width="3.00" height="2.00" fill="#fff"/><rect x="3.00" y="11.00" width="3.00" height="2.00" fill="#fff"/><rect x="7.00" y="11.00" width="3.00" height="2.00" fill="#fff"/><rect x="11.00" y="11.00" width="3.00" height="2.00" fill="#fff"/></g><path d="M0.4 2.4Q1 .8 3 1.6L4.6 .6L8.6 4.8L5.6 8.6L4.4 7.4Q2 8 1.4 5.4Q3 5.6 3.4 5Q1.4 4.4 .4 2.4Z" fill="#f2aa4c" stroke="#dc8c2c" stroke-width=".5"/><rect x="8.4" y="8.4" width="7.4" height="7.4" fill="#f0f0f0"/><path d="M9.2 9.2L15 15M15 9.2L9.2 15" stroke="#6a6a6a" stroke-width="2.1"/><path d="M9.2 9.2L15 15M15 9.2L9.2 15" stroke="#9a9a9a" stroke-width=".7"/></svg>
<svg style="left:70px;top:283px;" width="16" height="16" viewBox="0 0 16 16"><path d="M1.5 1.5H7L9.5 4V13.5H1.5Z" fill="#fff" stroke="#c89c60" stroke-width="1"/><path d="M3 4.5H6.5M3 6.5H6.5M3 8.5H6M3 10.5H5" stroke="#4a8fd9" stroke-width="1"/><path d="M8 4.5H14.5L11 15.5H4.5Z" fill="#fff" stroke="#a0825a" stroke-width="1"/><path d="M6.3 10H12.7L11 15.5H4.5Z" fill="#f3dfcc" stroke="#a0825a" stroke-width="1"/></svg>
<svg style="left:92px;top:283px;" width="16" height="16" viewBox="0 0 16 16"><path d="M.5 1.5H5L6.5 3V10.5H.5Z" fill="#fff" stroke="#c89c60" stroke-width="1"/><path d="M2.5 3.5H7.5L9.5 5.5V13H2.5Z" fill="#fff" stroke="#c89c60" stroke-width="1"/><path d="M4 6.5H6.5M4 8.5H6M4 10.5H5.5" stroke="#4a8fd9" stroke-width="1"/><path d="M8.5 4.5H14.5L11.5 15.5H5.5Z" fill="#fff" stroke="#a0825a" stroke-width="1"/><path d="M7 10H13L11.5 15.5H5.5Z" fill="#f3dfcc" stroke="#a0825a" stroke-width="1"/></svg>
<svg style="left:119px;top:283px;" width="16" height="16" viewBox="0 0 16 16"><rect x="3.5" y="1.5" width="8" height="3" rx="1.2" fill="#fff" stroke="#a0a0a0" stroke-width="1"/><path d="M5.5 4.5V8.5H2.5" fill="none" stroke="#a0a0a0" stroke-width="1"/><rect x="1" y="7.5" width="3" height="3" rx="1" fill="#fff" stroke="#a0a0a0" stroke-width="1"/><rect x="5.2" y="5.2" width="9" height="9.4" fill="#f4f8fc" stroke="#3f8cc8" stroke-width="1.6"/><rect x="7.5" y="6.6" width="4.4" height="2.2" fill="#fff" stroke="#a8a8a8" stroke-width=".7"/><rect x="7.5" y="11" width="4.4" height="2.2" fill="#fff" stroke="#a8a8a8" stroke-width=".7"/></svg>
<svg style="left:146px;top:283px;" width="16" height="16" viewBox="0 0 16 16"><rect x="2.5" y="2.5" width="11" height="10" fill="#eef3fa" stroke="#8a8a8a" stroke-width="1"/><rect x="2" y="2" width="12" height="2.6" fill="#3c74c8"/><rect x="3" y="8" width="10" height="1" fill="#8a8a8a"/></svg>
<svg style="left:173px;top:283px;" width="16" height="16" viewBox="0 0 16 16"><rect x="1.5" y="2.5" width="11" height="10" fill="#fff" stroke="#c89c60" stroke-width="1"/><rect x="1" y="2" width="12" height="2.6" fill="#3c74c8"/><rect x="7.4" y="7.4" width="7.4" height="7.4" fill="#f0f0f0"/><path d="M8.2 8.2L14 14M14 8.2L8.2 14" stroke="#6a6a6a" stroke-width="2.1"/><path d="M8.2 8.2L14 14M14 8.2L8.2 14" stroke="#9a9a9a" stroke-width=".7"/></svg>
<svg style="left:200px;top:283px;" width="16" height="16" viewBox="0 0 16 16"><rect x="1.5" y="1" width="12.5" height="1.4" fill="#303030"/><path d="M3.5 6.5L5 3.5H11L13 6.5" fill="#94a8c8" stroke="#6c86b0" stroke-width=".9"/><rect x="1.5" y="6.5" width="8" height="7.5" rx="1.4" fill="#f8d088" stroke="#dc9c3c" stroke-width="1"/><rect x="6.5" y="7.5" width="8.5" height="7.5" rx="1.4" fill="#fad898" stroke="#dc9c3c" stroke-width="1"/></svg>
<div style="left:64px;top:277px;width:1px;height:28px;background:#a0a0a0"></div>
<div style="left:113px;top:277px;width:1px;height:28px;background:#a0a0a0"></div>
<div style="left:140px;top:277px;width:1px;height:28px;background:#a0a0a0"></div>
<div style="left:167px;top:277px;width:1px;height:28px;background:#a0a0a0"></div>
<div style="left:194px;top:277px;width:1px;height:28px;background:#a0a0a0"></div>
<div style="left:221px;top:277px;width:1px;height:28px;background:#a0a0a0"></div>
<div style="left:224px;top:276px;width:22px;height:29px;background:#e5f1fb;border:1px solid #3c8cf0;box-sizing:border-box"></div>
<svg style="left:32px;top:310px;" width="16" height="16" viewBox="0 0 16 16"><path d="M4.5 .5H15V3" fill="none" stroke="#b4a468" stroke-width="1"/><path d="M4 2.5H13.5V15.5H11" fill="#fff" stroke="#4a7cc0" stroke-width="1"/><path d="M4 1.5H12Q13 1.5 13 3.5H11.5V14.5H2Q.6 14.5 1 12.5H2.5V3.5Q2.5 1.5 4 1.5Z" fill="#fff" stroke="#8e8e8e" stroke-width="1"/><path d="M4.5 5.5H9.5M4.5 7.5H9.5M4.5 9.5H9.5M4.5 11.5H9.5" stroke="#4a94d9" stroke-width="1"/><rect x="12.2" y="7" width="1" height="1" fill="#777"/><rect x="12.2" y="9.4" width="1" height="1" fill="#777"/><rect x="12.2" y="11.8" width="1" height="1" fill="#777"/></svg>
<span style="left:51.5px;top:310px;"><i style="letter-spacing:-1.01px;margin:0 0.50px 0 -0.50px">SQL</i> <i style="letter-spacing:-0.03px;margin:0 0.02px 0 -0.02px">History</i></span>
<div style="left:122px;top:308px;width:98px;height:21px;background:#e4e4e4;border:1px solid #a5a5a5;border-bottom:none;box-sizing:border-box"></div>
<svg style="left:129px;top:310px;" width="16" height="16" viewBox="0 0 16 16"><path d="M.5 1.5H5L7 3.5H13.5V5H.5Z" fill="#f4d088" stroke="#dca850" stroke-width="1"/><path d="M.5 1.5H5L6.2 3.5V12.5H.5Z" fill="#fdeebc" stroke="#dca850" stroke-width="1"/><path d="M6.5 4.5H14.5Q15 5.5 14.5 6.5H13.5V13.5H5.5Q4 13.5 4.5 11.5H5.5V6Q5.5 4.5 6.5 4.5Z" fill="#fff" stroke="#8e8e8e" stroke-width="1"/><path d="M7.5 7.5H11.5M7.5 9.5H11.5M7.5 11.5H10.5" stroke="#4a94d9" stroke-width="1"/></svg>
<span style="left:147.5px;top:310px;"><i style="letter-spacing:-1.01px;margin:0 0.50px 0 -0.50px">SQL</i> <i style="letter-spacing:-0.10px;margin:0 0.05px 0 -0.05px">Archive</i></span>
<div style="left:18px;top:328px;width:961px;height:251px;background:#f0f0f0;border:1px solid #a5a5a5;box-sizing:border-box"></div>
<div style="left:123px;top:328px;width:96px;height:1px;background:#e4e4e4"></div>
<span style="left:24.8px;top:338px;"><i style="letter-spacing:-0.31px;margin:0 0.15px 0 -0.15px">Search</i> <i style="letter-spacing:-1.01px;margin:0 0.50px 0 -0.50px">SQL</i> <i style="letter-spacing:-0.07px;margin:0 0.04px 0 -0.04px">Queries:</i></span>
<div style="left:129px;top:336px;width:500px;height:20px;background:#fff;border:1px solid #abadb3;box-sizing:border-box"></div>
<div style="left:20px;top:363px;width:957px;height:191px;background:#f0f0f0;border:1px solid #828790;border-bottom:2px solid #7a808c;box-sizing:border-box"></div>
<div style="left:977px;top:363px;width:1px;height:191px;background:#fbfbfb"></div>
<div style="left:21px;top:364px;width:955px;height:24px;background:linear-gradient(#fff,#fff 55%,#f6f8fc)"></div>
<div style="left:21px;top:387px;width:955px;height:1px;background:#e8ebf2"></div>
<div style="left:70px;top:364px;width:1px;height:23px;background:#e4e9f4"></div>
<div style="left:252px;top:364px;width:1px;height:23px;background:#e4e9f4"></div>
<div style="left:438px;top:364px;width:1px;height:23px;background:#e4e9f4"></div>
<div style="left:522px;top:364px;width:1px;height:23px;background:#e4e9f4"></div>
<div style="left:572px;top:364px;width:1px;height:23px;background:#e4e9f4"></div>
<span style="left:75.8px;top:369px;"><i style="letter-spacing:0.15px;margin:0 -0.08px 0 0.08px">Start</i> <i style="letter-spacing:-0.15px;margin:0 0.07px 0 -0.07px">Date/Time</i></span>
<div style="left:21px;top:388px;width:50px;height:147px;background:#f0f0f0"></div>
<div style="left:71px;top:389px;width:181px;height:15px;background:#fff"></div>
<div style="left:253px;top:389px;width:185px;height:15px;background:#fff"></div>
<div style="left:439px;top:389px;width:83px;height:15px;background:#fff"></div>
<div style="left:523px;top:389px;width:49px;height:15px;background:#fff"></div>
<div style="left:573px;top:389px;width:403px;height:15px;background:#fff"></div>
<span style="left:36px;top:388px;width:18px;text-align:center"><i style="letter-spacing:-0.12px;margin:0 0.06px 0 -0.06px">1</i></span>
<span style="left:71.3px;top:388px;"><i style="letter-spacing:0;margin:0 0.00px 0 -0.00px">February</i> <i style="letter-spacing:0.23px;margin:0 -0.12px 0 0.12px">24,</i> <i style="letter-spacing:-0.12px;margin:0 0.06px 0 -0.06px">2017</i> <i style="letter-spacing:0.19px;margin:0 -0.09px 0 0.09px">6:28:46</i> <i style="letter-spacing:-1.25px;margin:0 0.62px 0 -0.62px">PM</i> <i style="letter-spacing:-1.14px;margin:0 0.57px 0 -0.57px">PST</i></span>
<span style="left:253.2px;top:388px;"><i style="letter-spacing:0;margin:0 0.00px 0 -0.00px">February</i> <i style="letter-spacing:0.23px;margin:0 -0.12px 0 0.12px">24,</i> <i style="letter-spacing:-0.12px;margin:0 0.06px 0 -0.06px">2017</i> <i style="letter-spacing:0.19px;margin:0 -0.09px 0 0.09px">6:28:46</i> <i style="letter-spacing:-1.25px;margin:0 0.62px 0 -0.62px">PM</i> <i style="letter-spacing:-1.14px;margin:0 0.57px 0 -0.57px">PST</i></span>
<span style="left:439.6px;top:388px;"><i style="letter-spacing:-1.25px;margin:0 0.62px 0 -0.62px">MS</i> <i style="letter-spacing:-1.01px;margin:0 0.50px 0 -0.50px">SQL</i> <i style="letter-spacing:-0.07px;margin:0 0.03px 0 -0.03px">Server</i></span>
<span style="left:540px;top:388px;width:30.4px;text-align:right"><i style="letter-spacing:-0.12px;margin:0 0.06px 0 -0.06px">1</i></span>
<span style="left:573.6px;top:388px;">  <i style="letter-spacing:-1.13px;margin:0 0.57px 0 -0.57px">SELECT</i> <i style="letter-spacing:1.72px;margin:0 -0.86px 0 0.86px">*</i> <i style="letter-spacing:0;margin:0 -0.00px 0 0.00px">from</i> <i style="letter-spacing:-0.10px;margin:0 0.05px 0 -0.05px">Orders</i></span>
<div style="left:71px;top:405px;width:181px;height:15px;background:#fff"></div>
<div style="left:253px;top:405px;width:185px;height:15px;background:#fff"></div>
<div style="left:439px;top:405px;width:83px;height:15px;background:#fff"></div>
<div style="left:523px;top:405px;width:49px;height:15px;background:#fff"></div>
<div style="left:573px;top:405px;width:403px;height:15px;background:#fff"></div>
<span style="left:36px;top:404px;width:18px;text-align:center"><i style="letter-spacing:-0.12px;margin:0 0.06px 0 -0.06px">2</i></span>
<span style="left:71.3px;top:404px;"><i style="letter-spacing:0;margin:0 0.00px 0 -0.00px">February</i> <i style="letter-spacing:0.23px;margin:0 -0.12px 0 0.12px">24,</i> <i style="letter-spacing:-0.12px;margin:0 0.06px 0 -0.06px">2017</i> <i style="letter-spacing:0.19px;margin:0 -0.09px 0 0.09px">6:28:00</i> <i style="letter-spacing:-1.25px;margin:0 0.62px 0 -0.62px">PM</i> <i style="letter-spacing:-1.14px;margin:0 0.57px 0 -0.57px">PST</i></span>
<span style="left:253.2px;top:404px;"><i style="letter-spacing:0;margin:0 0.00px 0 -0.00px">February</i> <i style="letter-spacing:0.23px;margin:0 -0.12px 0 0.12px">24,</i> <i style="letter-spacing:-0.12px;margin:0 0.06px 0 -0.06px">2017</i> <i style="letter-spacing:0.19px;margin:0 -0.09px 0 0.09px">6:28:00</i> <i style="letter-spacing:-1.25px;margin:0 0.62px 0 -0.62px">PM</i> <i style="letter-spacing:-1.14px;margin:0 0.57px 0 -0.57px">PST</i></span>
<span style="left:439.6px;top:404px;"><i style="letter-spacing:-1.25px;margin:0 0.62px 0 -0.62px">MS</i> <i style="letter-spacing:-1.01px;margin:0 0.50px 0 -0.50px">SQL</i> <i style="letter-spacing:-0.07px;margin:0 0.03px 0 -0.03px">Server</i></span>
<span style="left:540px;top:404px;width:30.4px;text-align:right"><i style="letter-spacing:-0.12px;margin:0 0.06px 0 -0.06px">1</i></span>
<span style="left:573.6px;top:404px;"><i style="letter-spacing:-0.80px;margin:0 0.40px 0 -0.40px">UPDATE</i> <i style="letter-spacing:-0.16px;margin:0 0.08px 0 -0.08px">bistudio_example</i> <i style="letter-spacing:-1.14px;margin:0 0.57px 0 -0.57px">SET</i> <i style="letter-spacing:0.08px;margin:0 -0.04px 0 0.04px">Tax_Amount=100</i> <i style="letter-spacing:-0.99px;margin:0 0.50px 0 -0.50px">WHERE</i> <i style="letter-spacing:0.10px;margin:0 -0.05px 0 0.05px">City='Perth'</i>  <i style="letter-spacing:-1.06px;margin:0 0.53px 0 -0.53px">GO</i></span>
<div style="left:71px;top:421px;width:181px;height:15px;background:#fff"></div>
<div style="left:253px;top:421px;width:185px;height:15px;background:#fff"></div>
<div style="left:439px;top:421px;width:83px;height:15px;background:#fff"></div>
<div style="left:523px;top:421px;width:49px;height:15px;background:#fff"></div>
<div style="left:573px;top:421px;width:403px;height:15px;background:#fff"></div>
<div style="left:71px;top:421px;width:181px;height:15px;background:#3399ff"></div>
<span style="left:36px;top:420px;width:18px;text-align:center"><i style="letter-spacing:-0.12px;margin:0 0.06px 0 -0.06px">3</i></span>
<span style="left:71.3px;top:420px;color:#fff"><i style="letter-spacing:0;margin:0 0.00px 0 -0.00px">February</i> <i style="letter-spacing:0.23px;margin:0 -0.12px 0 0.12px">24,</i> <i style="letter-spacing:-0.12px;margin:0 0.06px 0 -0.06px">2017</i> <i style="letter-spacing:0.19px;margin:0 -0.09px 0 0.09px">6:27:51</i> <i style="letter-spacing:-1.25px;margin:0 0.62px 0 -0.62px">PM</i> <i style="letter-spacing:-1.14px;margin:0 0.57px 0 -0.57px">PST</i></span>
<span style="left:253.2px;top:420px;"><i style="letter-spacing:0;margin:0 0.00px 0 -0.00px">February</i> <i style="letter-spacing:0.23px;margin:0 -0.12px 0 0.12px">24,</i> <i style="letter-spacing:-0.12px;margin:0 0.06px 0 -0.06px">2017</i> <i style="letter-spacing:0.19px;margin:0 -0.09px 0 0.09px">6:27:51</i> <i style="letter-spacing:-1.25px;margin:0 0.62px 0 -0.62px">PM</i> <i style="letter-spacing:-1.14px;margin:0 0.57px 0 -0.57px">PST</i></span>
<span style="left:439.6px;top:420px;"><i style="letter-spacing:-1.25px;margin:0 0.62px 0 -0.62px">MS</i> <i style="letter-spacing:-1.01px;margin:0 0.50px 0 -0.50px">SQL</i> <i style="letter-spacing:-0.07px;margin:0 0.03px 0 -0.03px">Server</i></span>
<span style="left:540px;top:420px;width:30.4px;text-align:right"><i style="letter-spacing:-0.12px;margin:0 0.06px 0 -0.06px">1</i></span>
<span style="left:573.6px;top:420px;"><i style="letter-spacing:-1.13px;margin:0 0.57px 0 -0.57px">SELECT</i> <i style="letter-spacing:1.72px;margin:0 -0.86px 0 0.86px">*</i> <i style="letter-spacing:-0.85px;margin:0 0.42px 0 -0.42px">FROM</i> <i style="letter-spacing:-0.16px;margin:0 0.08px 0 -0.08px">bistudio_example</i> <i style="letter-spacing:-0.99px;margin:0 0.50px 0 -0.50px">WHERE</i> <i style="letter-spacing:0.01px;margin:0 -0.01px 0 0.01px">City</i> <i style="letter-spacing:-0.55px;margin:0 0.27px 0 -0.27px">Like</i> <i style="letter-spacing:-0.24px;margin:0 0.12px 0 -0.12px">'Perth'Go</i></span>
<div style="left:71px;top:437px;width:181px;height:15px;background:#fff"></div>
<div style="left:253px;top:437px;width:185px;height:15px;background:#fff"></div>
<div style="left:439px;top:437px;width:83px;height:15px;background:#fff"></div>
<div style="left:523px;top:437px;width:49px;height:15px;background:#fff"></div>
<div style="left:573px;top:437px;width:403px;height:15px;background:#fff"></div>
<span style="left:36px;top:436px;width:18px;text-align:center"><i style="letter-spacing:-0.12px;margin:0 0.06px 0 -0.06px">4</i></span>
<span style="left:71.3px;top:436px;"><i style="letter-spacing:0;margin:0 0.00px 0 -0.00px">February</i> <i style="letter-spacing:0.23px;margin:0 -0.12px 0 0.12px">24,</i> <i style="letter-spacing:-0.12px;margin:0 0.06px 0 -0.06px">2017</i> <i style="letter-spacing:0.19px;margin:0 -0.09px 0 0.09px">6:27:22</i> <i style="letter-spacing:-1.25px;margin:0 0.62px 0 -0.62px">PM</i> <i style="letter-spacing:-1.14px;margin:0 0.57px 0 -0.57px">PST</i></span>
<span style="left:253.2px;top:436px;"><i style="letter-spacing:0;margin:0 0.00px 0 -0.00px">February</i> <i style="letter-spacing:0.23px;margin:0 -0.12px 0 0.12px">24,</i> <i style="letter-spacing:-0.12px;margin:0 0.06px 0 -0.06px">2017</i> <i style="letter-spacing:0.19px;margin:0 -0.09px 0 0.09px">6:27:22</i> <i style="letter-spacing:-1.25px;margin:0 0.62px 0 -0.62px">PM</i> <i style="letter-spacing:-1.14px;margin:0 0.57px 0 -0.57px">PST</i></span>
<span style="left:439.6px;top:436px;"><i style="letter-spacing:-1.25px;margin:0 0.62px 0 -0.62px">MS</i> <i style="letter-spacing:-1.01px;margin:0 0.50px 0 -0.50px">SQL</i> <i style="letter-spacing:-0.07px;margin:0 0.03px 0 -0.03px">Server</i></span>
<span style="left:540px;top:436px;width:30.4px;text-align:right"><i style="letter-spacing:-0.12px;margin:0 0.06px 0 -0.06px">1</i></span>
<span style="left:573.6px;top:436px;"><i style="letter-spacing:-1.13px;margin:0 0.57px 0 -0.57px">SELECT</i> <i style="letter-spacing:1.72px;margin:0 -0.86px 0 0.86px">*</i> <i style="letter-spacing:-0.85px;margin:0 0.42px 0 -0.42px">FROM</i> <i style="letter-spacing:-0.16px;margin:0 0.08px 0 -0.08px">bistudio_example</i> <i style="letter-spacing:-0.99px;margin:0 0.50px 0 -0.50px">WHERE</i> <i style="letter-spacing:0.01px;margin:0 -0.01px 0 0.01px">City</i> <i style="letter-spacing:-0.55px;margin:0 0.27px 0 -0.27px">Like</i> <i style="letter-spacing:-0.24px;margin:0 0.12px 0 -0.12px">'Perth'Go</i></span>
<div style="left:71px;top:453px;width:181px;height:15px;background:#fff"></div>
<div style="left:253px;top:453px;width:185px;height:15px;background:#fff"></div>
<div style="left:439px;top:453px;width:83px;height:15px;background:#fff"></div>
<div style="left:523px;top:453px;width:49px;height:15px;background:#fff"></div>
<div style="left:573px;top:453px;width:403px;height:15px;background:#fff"></div>
<span style="left:36px;top:452px;width:18px;text-align:center"><i style="letter-spacing:-0.12px;margin:0 0.06px 0 -0.06px">5</i></span>
<span style="left:71.3px;top:452px;"><i style="letter-spacing:0;margin:0 0.00px 0 -0.00px">February</i> <i style="letter-spacing:0.23px;margin:0 -0.12px 0 0.12px">24,</i> <i style="letter-spacing:-0.12px;margin:0 0.06px 0 -0.06px">2017</i> <i style="letter-spacing:0.19px;margin:0 -0.09px 0 0.09px">6:27:09</i> <i style="letter-spacing:-1.25px;margin:0 0.62px 0 -0.62px">PM</i> <i style="letter-spacing:-1.14px;margin:0 0.57px 0 -0.57px">PST</i></span>
<span style="left:253.2px;top:452px;"><i style="letter-spacing:0;margin:0 0.00px 0 -0.00px">February</i> <i style="letter-spacing:0.23px;margin:0 -0.12px 0 0.12px">24,</i> <i style="letter-spacing:-0.12px;margin:0 0.06px 0 -0.06px">2017</i> <i style="letter-spacing:0.19px;margin:0 -0.09px 0 0.09px">6:27:09</i> <i style="letter-spacing:-1.25px;margin:0 0.62px 0 -0.62px">PM</i> <i style="letter-spacing:-1.14px;margin:0 0.57px 0 -0.57px">PST</i></span>
<span style="left:439.6px;top:452px;"><i style="letter-spacing:-1.25px;margin:0 0.62px 0 -0.62px">MS</i> <i style="letter-spacing:-1.01px;margin:0 0.50px 0 -0.50px">SQL</i> <i style="letter-spacing:-0.07px;margin:0 0.03px 0 -0.03px">Server</i></span>
<span style="left:540px;top:452px;width:30.4px;text-align:right"><i style="letter-spacing:-0.12px;margin:0 0.06px 0 -0.06px">1</i></span>
<span style="left:573.6px;top:452px;"><i style="letter-spacing:-1.13px;margin:0 0.57px 0 -0.57px">SELECT</i> <i style="letter-spacing:1.72px;margin:0 -0.86px 0 0.86px">*</i> <i style="letter-spacing:-0.85px;margin:0 0.42px 0 -0.42px">FROM</i> <i style="letter-spacing:-0.16px;margin:0 0.08px 0 -0.08px">bistudio_example</i> <i style="letter-spacing:-0.99px;margin:0 0.50px 0 -0.50px">WHERE</i> <i style="letter-spacing:0.01px;margin:0 -0.01px 0 0.01px">City</i> <i style="letter-spacing:-0.55px;margin:0 0.27px 0 -0.27px">Like</i> <i style="letter-spacing:-0.24px;margin:0 0.12px 0 -0.12px">'Perth'Go</i></span>
<div style="left:71px;top:469px;width:181px;height:15px;background:#fff"></div>
<div style="left:253px;top:469px;width:185px;height:15px;background:#fff"></div>
<div style="left:439px;top:469px;width:83px;height:15px;background:#fff"></div>
<div style="left:523px;top:469px;width:49px;height:15px;background:#fff"></div>
<div style="left:573px;top:469px;width:403px;height:15px;background:#fff"></div>
<span style="left:36px;top:468px;width:18px;text-align:center"><i style="letter-spacing:-0.12px;margin:0 0.06px 0 -0.06px">6</i></span>
<span style="left:71.3px;top:468px;"><i style="letter-spacing:0;margin:0 0.00px 0 -0.00px">February</i> <i style="letter-spacing:0.23px;margin:0 -0.12px 0 0.12px">24,</i> <i style="letter-spacing:-0.12px;margin:0 0.06px 0 -0.06px">2017</i> <i style="letter-spacing:0.19px;margin:0 -0.09px 0 0.09px">6:21:40</i> <i style="letter-spacing:-1.25px;margin:0 0.62px 0 -0.62px">PM</i> <i style="letter-spacing:-1.14px;margin:0 0.57px 0 -0.57px">PST</i></span>
<span style="left:253.2px;top:468px;"><i style="letter-spacing:0;margin:0 0.00px 0 -0.00px">February</i> <i style="letter-spacing:0.23px;margin:0 -0.12px 0 0.12px">24,</i> <i style="letter-spacing:-0.12px;margin:0 0.06px 0 -0.06px">2017</i> <i style="letter-spacing:0.19px;margin:0 -0.09px 0 0.09px">6:21:58</i> <i style="letter-spacing:-1.25px;margin:0 0.62px 0 -0.62px">PM</i> <i style="letter-spacing:-1.14px;margin:0 0.57px 0 -0.57px">PST</i></span>
<span style="left:439.6px;top:468px;"><i style="letter-spacing:-1.25px;margin:0 0.62px 0 -0.62px">MS</i> <i style="letter-spacing:-1.01px;margin:0 0.50px 0 -0.50px">SQL</i> <i style="letter-spacing:-0.07px;margin:0 0.03px 0 -0.03px">Server</i></span>
<span style="left:540px;top:468px;width:30.4px;text-align:right"><i style="letter-spacing:-0.12px;margin:0 0.06px 0 -0.06px">1</i></span>
<span style="left:573.6px;top:468px;"><i style="letter-spacing:-1.13px;margin:0 0.57px 0 -0.57px">SELECT</i> <i style="letter-spacing:1.72px;margin:0 -0.86px 0 0.86px">*</i> <i style="letter-spacing:-0.85px;margin:0 0.42px 0 -0.42px">FROM</i> <i style="letter-spacing:-0.10px;margin:0 0.05px 0 -0.05px">Orders</i></span>
<div style="left:71px;top:485px;width:181px;height:15px;background:#fff"></div>
<div style="left:253px;top:485px;width:185px;height:15px;background:#fff"></div>
<div style="left:439px;top:485px;width:83px;height:15px;background:#fff"></div>
<div style="left:523px;top:485px;width:49px;height:15px;background:#fff"></div>
<div style="left:573px;top:485px;width:403px;height:15px;background:#fff"></div>
<span style="left:36px;top:484px;width:18px;text-align:center"><i style="letter-spacing:-0.12px;margin:0 0.06px 0 -0.06px">7</i></span>
<span style="left:71.3px;top:484px;"><i style="letter-spacing:0;margin:0 0.00px 0 -0.00px">February</i> <i style="letter-spacing:0.23px;margin:0 -0.12px 0 0.12px">21,</i> <i style="letter-spacing:-0.12px;margin:0 0.06px 0 -0.06px">2017</i> <i style="letter-spacing:0.19px;margin:0 -0.09px 0 0.09px">4:47:23</i> <i style="letter-spacing:-0.75px;margin:0 0.38px 0 -0.38px">AM</i> <i style="letter-spacing:-1.14px;margin:0 0.57px 0 -0.57px">PST</i></span>
<span style="left:253.2px;top:484px;"><i style="letter-spacing:0;margin:0 0.00px 0 -0.00px">February</i> <i style="letter-spacing:0.23px;margin:0 -0.12px 0 0.12px">21,</i> <i style="letter-spacing:-0.12px;margin:0 0.06px 0 -0.06px">2017</i> <i style="letter-spacing:0.19px;margin:0 -0.09px 0 0.09px">4:47:25</i> <i style="letter-spacing:-0.75px;margin:0 0.38px 0 -0.38px">AM</i> <i style="letter-spacing:-1.14px;margin:0 0.57px 0 -0.57px">PST</i></span>
<span style="left:439.6px;top:484px;"><i style="letter-spacing:-1.25px;margin:0 0.62px 0 -0.62px">MS</i> <i style="letter-spacing:-1.01px;margin:0 0.50px 0 -0.50px">SQL</i> <i style="letter-spacing:-0.07px;margin:0 0.03px 0 -0.03px">Server</i></span>
<span style="left:540px;top:484px;width:30.4px;text-align:right"><i style="letter-spacing:-0.12px;margin:0 0.06px 0 -0.06px">1</i></span>
<span style="left:573.6px;top:484px;"><i style="letter-spacing:-0.12px;margin:0 0.06px 0 -0.06px">select</i> <i style="letter-spacing:1.72px;margin:0 -0.86px 0 0.86px">*</i> <i style="letter-spacing:0;margin:0 -0.00px 0 0.00px">from</i> <i style="letter-spacing:-0.15px;margin:0 0.07px 0 -0.07px">dbo.bistudio_examplego</i></span>
<div style="left:71px;top:501px;width:181px;height:15px;background:#fff"></div>
<div style="left:253px;top:501px;width:185px;height:15px;background:#fff"></div>
<div style="left:439px;top:501px;width:83px;height:15px;background:#fff"></div>
<div style="left:523px;top:501px;width:49px;height:15px;background:#fff"></div>
<div style="left:573px;top:501px;width:403px;height:15px;background:#fff"></div>
<span style="left:36px;top:500px;width:18px;text-align:center"><i style="letter-spacing:-0.12px;margin:0 0.06px 0 -0.06px">8</i></span>
<span style="left:71.3px;top:500px;"><i style="letter-spacing:0;margin:0 0.00px 0 -0.00px">February</i> <i style="letter-spacing:0.23px;margin:0 -0.12px 0 0.12px">21,</i> <i style="letter-spacing:-0.12px;margin:0 0.06px 0 -0.06px">2017</i> <i style="letter-spacing:0.19px;margin:0 -0.09px 0 0.09px">3:47:56</i> <i style="letter-spacing:-0.75px;margin:0 0.38px 0 -0.38px">AM</i> <i style="letter-spacing:-1.14px;margin:0 0.57px 0 -0.57px">PST</i></span>
<span style="left:253.2px;top:500px;"><i style="letter-spacing:0;margin:0 0.00px 0 -0.00px">February</i> <i style="letter-spacing:0.23px;margin:0 -0.12px 0 0.12px">21,</i> <i style="letter-spacing:-0.12px;margin:0 0.06px 0 -0.06px">2017</i> <i style="letter-spacing:0.19px;margin:0 -0.09px 0 0.09px">3:47:57</i> <i style="letter-spacing:-0.75px;margin:0 0.38px 0 -0.38px">AM</i> <i style="letter-spacing:-1.14px;margin:0 0.57px 0 -0.57px">PST</i></span>
<span style="left:439.6px;top:500px;"><i style="letter-spacing:-1.25px;margin:0 0.62px 0 -0.62px">MS</i> <i style="letter-spacing:-1.01px;margin:0 0.50px 0 -0.50px">SQL</i> <i style="letter-spacing:-0.07px;margin:0 0.03px 0 -0.03px">Server</i></span>
<span style="left:540px;top:500px;width:30.4px;text-align:right"><i style="letter-spacing:-0.12px;margin:0 0.06px 0 -0.06px">1</i></span>
<span style="left:573.6px;top:500px;"><i style="letter-spacing:-1.13px;margin:0 0.57px 0 -0.57px">SELECT</i> <i style="letter-spacing:1.72px;margin:0 -0.86px 0 0.86px">*</i> <i style="letter-spacing:-0.85px;margin:0 0.42px 0 -0.42px">FROM</i> <i style="letter-spacing:-0.16px;margin:0 0.08px 0 -0.08px">bistudio_example</i> <i style="letter-spacing:-0.99px;margin:0 0.50px 0 -0.50px">WHERE</i> <i style="letter-spacing:0.01px;margin:0 -0.01px 0 0.01px">City</i> <i style="letter-spacing:-0.55px;margin:0 0.27px 0 -0.27px">Like</i> <i style="letter-spacing:-0.24px;margin:0 0.12px 0 -0.12px">'Perth'Go</i></span>
<div style="left:71px;top:517px;width:181px;height:15px;background:#fff"></div>
<div style="left:253px;top:517px;width:185px;height:15px;background:#fff"></div>
<div style="left:439px;top:517px;width:83px;height:15px;background:#fff"></div>
<div style="left:523px;top:517px;width:49px;height:15px;background:#fff"></div>
<div style="left:573px;top:517px;width:403px;height:15px;background:#fff"></div>
<span style="left:36px;top:516px;width:18px;text-align:center"><i style="letter-spacing:-0.12px;margin:0 0.06px 0 -0.06px">9</i></span>
<span style="left:71.3px;top:516px;"><i style="letter-spacing:0;margin:0 0.00px 0 -0.00px">February</i> <i style="letter-spacing:0.23px;margin:0 -0.12px 0 0.12px">21,</i> <i style="letter-spacing:-0.12px;margin:0 0.06px 0 -0.06px">2017</i> <i style="letter-spacing:0.19px;margin:0 -0.09px 0 0.09px">1:05:09</i> <i style="letter-spacing:-0.75px;margin:0 0.38px 0 -0.38px">AM</i> <i style="letter-spacing:-1.14px;margin:0 0.57px 0 -0.57px">PST</i></span>
<span style="left:253.2px;top:516px;"><i style="letter-spacing:0;margin:0 0.00px 0 -0.00px">February</i> <i style="letter-spacing:0.23px;margin:0 -0.12px 0 0.12px">21,</i> <i style="letter-spacing:-0.12px;margin:0 0.06px 0 -0.06px">2017</i> <i style="letter-spacing:0.19px;margin:0 -0.09px 0 0.09px">1:05:09</i> <i style="letter-spacing:-0.75px;margin:0 0.38px 0 -0.38px">AM</i> <i style="letter-spacing:-1.14px;margin:0 0.57px 0 -0.57px">PST</i></span>
<span style="left:439.6px;top:516px;"><i style="letter-spacing:-1.25px;margin:0 0.62px 0 -0.62px">MS</i> <i style="letter-spacing:-1.01px;margin:0 0.50px 0 -0.50px">SQL</i> <i style="letter-spacing:-0.07px;margin:0 0.03px 0 -0.03px">Server</i></span>
<span style="left:540px;top:516px;width:30.4px;text-align:right"><i style="letter-spacing:-0.12px;margin:0 0.06px 0 -0.06px">0</i></span>
<span style="left:573.6px;top:516px;"></span>
<div style="left:21px;top:533px;width:955px;height:3px;background:#fafafa"></div>
<div style="left:21px;top:536px;width:955px;height:16px;background:#f0f0f0"></div>
<div style="left:88px;top:536px;width:471px;height:16px;background:#cdcdcd"></div>
<svg style="left:75px;top:539.5px" width="7" height="9" viewBox="0 0 7 9"><path d="M5.5 1L1.5 4.5L5.5 8" fill="none" stroke="#444" stroke-width="1.6"/></svg>
<svg style="left:964px;top:539.5px" width="7" height="9" viewBox="0 0 7 9"><path d="M1.5 1L5.5 4.5L1.5 8" fill="none" stroke="#444" stroke-width="1.6"/></svg>
<span style="left:26.8px;top:558px;"><i style="letter-spacing:-0.31px;margin:0 0.15px 0 -0.15px">Search</i> <i style="letter-spacing:-0.09px;margin:0 0.05px 0 -0.05px">Results:</i> <i style="letter-spacing:-0.12px;margin:0 0.06px 0 -0.06px">9</i> <i style="letter-spacing:0.23px;margin:0 -0.12px 0 0.12px">out</i> <i style="letter-spacing:0.41px;margin:0 -0.20px 0 0.20px">of</i> <i style="letter-spacing:-0.12px;margin:0 0.06px 0 -0.06px">9</i> <i style="letter-spacing:0;margin:0 0.00px 0 -0.00px">entries</i></span>
<div style="left:777px;top:555px;width:200px;height:22px;border:1px solid #c4c4c4;box-sizing:border-box"></div>
<span style="left:781.7px;top:558px;"><i style="letter-spacing:-0.24px;margin:0 0.12px 0 -0.12px">Complete.</i></span>
<div style="left:492px;top:581px;width:1px;height:2px;background:#8e8e8e"></div>
<div style="left:494px;top:581px;width:1px;height:2px;background:#8e8e8e"></div>
<div style="left:496px;top:581px;width:1px;height:2px;background:#8e8e8e"></div>
<div style="left:498px;top:581px;width:1px;height:2px;background:#8e8e8e"></div>
<div style="left:500px;top:581px;width:1px;height:2px;background:#8e8e8e"></div>
<div style="left:502px;top:581px;width:1px;height:2px;background:#8e8e8e"></div>
<div style="left:504px;top:581px;width:1px;height:2px;background:#8e8e8e"></div>
<div style="left:506px;top:581px;width:1px;height:2px;background:#8e8e8e"></div>
<div style="left:18px;top:584px;width:961px;height:56px;background:#f0f0f0;border:1px solid #b5b5b5;box-sizing:border-box"></div>
<div style="left:19px;top:585px;width:959px;height:17px;background:#ffffe1"></div>
<div style="left:19px;top:602px;width:46px;height:16px;background:#f0f0f0"></div>
<div style="left:65px;top:602px;width:913px;height:16px;background:#fff"></div>
<div style="left:65px;top:585px;width:1px;height:33px;background:#c4c4c4"></div>
<div style="left:19px;top:618px;width:959px;height:1px;background:#c4c4c4"></div>
<span style="left:24.6px;top:586px;color:#8b1a1a"><i style="letter-spacing:-0.12px;margin:0 0.06px 0 -0.06px">1</i></span>
<span style="left:24.6px;top:603px;color:#8b1a1a"><i style="letter-spacing:-0.12px;margin:0 0.06px 0 -0.06px">2</i></span>
<span class="m" style="left:71.2px;top:587px;"><i style='color:#0000ff;font-weight:bold'>SELECT</i> * <i style='color:#0000ff;font-weight:bold'>FROM</i> bistudio_example <i style='color:#0000ff;font-weight:bold'>WHERE</i> City <i style='color:#0000ff;font-weight:bold'>Like</i> <i style='color:#ff0000'>'Perth'</i></span>
<span style="left:71.3px;top:603px;color:#3cb043"><i style="letter-spacing:-0.84px;margin:0 0.42px 0 -0.42px">Go</i></span>
<span style="left:854.8px;top:621px;"><i style="letter-spacing:0.23px;margin:0 -0.12px 0 0.12px">1:1</i></span>
<span style="left:894.4px;top:621px;color:#6d6d6d"><i style="letter-spacing:-0.93px;margin:0 0.47px 0 -0.47px">CRLF</i></span>
<span style="left:938.8px;top:621px;color:#6d6d6d"><i style="letter-spacing:-0.43px;margin:0 0.22px 0 -0.22px">UTF-8</i></span>
<div style="left:229px;top:7px;width:762px;height:377px;background:#8dc7fa;border:1px solid #6aa4dd;box-sizing:border-box"></div>
<svg style="left:239px;top:14px;" width="16" height="16" viewBox="0 0 16 16"><defs><linearGradient id="gC" x1="0" x2="1"><stop offset="0" stop-color="#2d8ae6"/><stop offset=".45" stop-color="#62c8fa"/><stop offset="1" stop-color="#1c74da"/></linearGradient></defs><path d="M.4 2C.4 -.2 11.8 -.2 11.8 2V11C11.8 13.2 .4 13.2 .4 11Z" fill="#f6f6f6" stroke="#c4c4c4" stroke-width=".8"/><path d="M.4 2C.4 4 11.8 4 11.8 2" fill="none" stroke="#d0d0d0" stroke-width=".6"/><path d="M.4 4.4C3 5.8 9 5.8 11.8 4.4V9.4C9 10.8 3 10.8 .4 9.4Z" fill="url(#gC)"/><circle cx="12.6" cy="3.6" r="2.3" fill="#4a9fee"/><circle cx="12.3" cy="3" r="1" fill="#8fcaf8"/><rect x="5.6" y="7.5" width="10.2" height="8.2" fill="#7fd2f8" stroke="#b4b4b4" stroke-width=".9"/><rect x="6.1" y="8" width="9.2" height="1.5" fill="#f4f4f4"/><path d="M9 9.6V15.2M12.2 9.6V15.2M6.1 12.4H15.3" stroke="#58aee8" stroke-width=".7" fill="none"/></svg>
<span style="left:584px;top:14.5px;letter-spacing:0.10px;font-size:15px;color:#2a3040;">Options</span>
<div style="left:953px;top:8px;width:31px;height:20px;background:#c75050"></div>
<svg style="left:963px;top:13.5px" width="11" height="10" viewBox="0 0 11 10"><path d="M1.5 1.2L9.5 8.8M9.5 1.2L1.5 8.8" stroke="#fff" stroke-width="1.9" fill="none"/></svg>
<div style="left:236px;top:37px;width:748px;height:340px;background:#f0f0f0;border:1px solid #78b0e8;box-sizing:border-box"></div>
<div style="left:237px;top:38px;width:300px;height:290px;background:#e6eaee"></div>
<div style="left:537px;top:38px;width:1px;height:290px;background:#bfc3c8"></div>
<div style="left:237px;top:328px;width:746px;height:1px;background:#c8c8c8"></div>
<div style="left:245px;top:46px;width:218px;height:22px;background:#fff;border:1px solid #6f6f6f;border-radius:11px;box-sizing:border-box"></div>
<svg style="left:248px;top:49px" width="16" height="16" viewBox="0 0 16 16"><circle cx="6.6" cy="6.4" r="3.6" fill="none" stroke="#7a7a7a" stroke-width="1.7"/><path d="M9.4 9.2L13.4 13.2" stroke="#7a7a7a" stroke-width="2" stroke-linecap="round"/></svg>
<svg style="left:475px;top:53px" width="11" height="13" viewBox="0 0 11 13"><path d="M.5 2V.5H10.5V2M.5 11V12.5H10.5V11M5.5 2.5V10.5" fill="none" stroke="#6a6a6a" stroke-width="1"/><path d="M3.5 4.8L5.5 2.3L7.5 4.8ZM3.5 8.2L5.5 10.7L7.5 8.2Z" fill="#6a6a6a"/></svg>
<svg style="left:500px;top:53px" width="11" height="13" viewBox="0 0 11 13"><path d="M0 5.5H11M0 7.5H11M5.5 0V4M5.5 9V13" fill="none" stroke="#6a6a6a" stroke-width="1"/><path d="M3.5 2L5.5 4.6L7.5 2ZM3.5 11L5.5 8.4L7.5 11Z" fill="#6a6a6a"/></svg>
<div style="left:526px;top:78px;width:10px;height:90px;background:linear-gradient(90deg,#f2f2f2,#dadada);border:1px solid #cfcfcf;border-radius:2px;box-sizing:border-box"></div>
<div style="left:237px;top:185px;width:287px;height:18px;background:#3399ff"></div>
<svg style="left:250px;top:81px" width="9" height="9" viewBox="0 0 9 9"><rect x=".5" y=".5" width="8" height="8" rx="1" fill="#fff" stroke="#979797"/><path d="M2 4.5H7" stroke="#3a4a9c" stroke-width="1"/></svg>
<span class="b" style="left:264.3px;top:77px;"><i style="letter-spacing:0.43px;margin:0 -0.22px 0 0.22px">General</i></span>
<span style="left:279.9px;top:95px;"><i style="letter-spacing:-0.13px;margin:0 0.07px 0 -0.07px">Appearance</i></span>
<span style="left:279.9px;top:113px;"><i style="letter-spacing:-0.20px;margin:0 0.10px 0 -0.10px">Workspace</i></span>
<span style="left:279.9px;top:131px;"><i style="letter-spacing:0.01px;margin:0 -0.00px 0 0.00px">Query</i> <i style="letter-spacing:-0.23px;margin:0 0.12px 0 -0.12px">Windows</i></span>
<span style="left:279.9px;top:149px;"><i style="letter-spacing:0.02px;margin:0 -0.01px 0 0.01px">Chart</i></span>
<span style="left:279.9px;top:167px;"><i style="letter-spacing:-0.20px;margin:0 0.10px 0 -0.10px">Scripting</i></span>
<span style="left:279.9px;top:185px;color:#fff"><i style="letter-spacing:-0.03px;margin:0 0.02px 0 -0.02px">History</i></span>
<span style="left:279.9px;top:203px;"><i style="letter-spacing:-0.30px;margin:0 0.15px 0 -0.15px">Describe</i></span>
<span style="left:279.9px;top:221px;"><i style="letter-spacing:-0.15px;margin:0 0.07px 0 -0.07px">Execution</i> <i style="letter-spacing:-0.10px;margin:0 0.05px 0 -0.05px">Monitor</i></span>
<span style="left:279.9px;top:239px;"><i style="letter-spacing:-0.20px;margin:0 0.10px 0 -0.10px">Parameterized</i> <i style="letter-spacing:-0.23px;margin:0 0.12px 0 -0.12px">Scripts</i></span>
<span class="b" style="left:264.3px;top:257px;"><i style="letter-spacing:0.62px;margin:0 -0.31px 0 0.31px">Table</i> <i style="letter-spacing:0.79px;margin:0 -0.39px 0 0.39px">Data</i> <i style="letter-spacing:0.20px;margin:0 -0.10px 0 0.10px">Editor</i></span>
<span class="b" style="left:264.3px;top:275px;"><i style="letter-spacing:0.40px;margin:0 -0.20px 0 0.20px">Procedure</i> <i style="letter-spacing:0.20px;margin:0 -0.10px 0 0.10px">Editor</i></span>
<svg style="left:250px;top:297px" width="9" height="9" viewBox="0 0 9 9"><rect x=".5" y=".5" width="8" height="8" rx="1" fill="#fff" stroke="#979797"/><path d="M2 4.5H7M4.5 2V7" stroke="#3a4a9c" stroke-width="1"/></svg>
<span class="b" style="left:264.3px;top:293px;"><i style="letter-spacing:-0.54px;margin:0 0.27px 0 -0.27px">SQL</i> <i style="letter-spacing:0.20px;margin:0 -0.10px 0 0.10px">Editor</i></span>
<svg style="left:250px;top:315px" width="9" height="9" viewBox="0 0 9 9"><rect x=".5" y=".5" width="8" height="8" rx="1" fill="#fff" stroke="#979797"/><path d="M2 4.5H7M4.5 2V7" stroke="#3a4a9c" stroke-width="1"/></svg>
<span class="b" style="left:264.3px;top:311px;"><i style="letter-spacing:1.05px;margin:0 -0.52px 0 0.52px">Text</i> <i style="letter-spacing:0.20px;margin:0 -0.10px 0 0.10px">Editor</i></span>
<span class="b" style="left:548px;top:49px;"><i style="letter-spacing:0.43px;margin:0 -0.22px 0 0.22px">General</i></span>
<span style="left:597px;top:49px;letter-spacing:0">›</span>
<span class="b" style="left:607px;top:49px;"><i style="letter-spacing:0.44px;margin:0 -0.22px 0 0.22px">History</i></span>
<div style="left:553px;top:82px;width:415px;height:191px;background:#fff;border:1px solid #e0e0e0;box-sizing:border-box"></div>
<div style="left:554px;top:83px;width:413px;height:18px;background:#e8e8e8"></div>
<div style="left:554px;top:101px;width:14px;height:162px;background:#e8e8e8"></div>
<svg style="left:558px;top:88px" width="9" height="9" viewBox="0 0 9 9"><rect x=".5" y=".5" width="8" height="8" rx="1" fill="#fff" stroke="#979797"/><path d="M2 4.5H7" stroke="#3a4a9c" stroke-width="1"/></svg>
<div style="left:568px;top:101px;width:399px;height:18px;background:#fff"></div>
<div style="left:568px;top:118px;width:399px;height:1px;background:#eeeeee"></div>
<div style="left:704px;top:101px;width:1px;height:18px;background:#e6e6e6"></div>
<span style="left:567.6px;top:102px;"><i style="letter-spacing:-0.52px;margin:0 0.26px 0 -0.26px">Maximum</i> <i style="letter-spacing:-0.35px;margin:0 0.18px 0 -0.18px">Number</i> <i style="letter-spacing:0.41px;margin:0 -0.20px 0 0.20px">of</i> <i style="letter-spacing:-0.12px;margin:0 0.06px 0 -0.06px">Entri</i><i style="letter-spacing:0.61px;margin:0 -0.30px 0 0.30px">...</i></span>
<span style="left:705.4px;top:101px;"><i style="letter-spacing:-0.12px;margin:0 0.06px 0 -0.06px">20</i></span>
<div style="left:568px;top:119px;width:399px;height:18px;background:#f7f8ec"></div>
<div style="left:568px;top:136px;width:399px;height:1px;background:#eeeeee"></div>
<div style="left:704px;top:119px;width:1px;height:18px;background:#e6e6e6"></div>
<span style="left:567.6px;top:120px;"><i style="letter-spacing:-0.52px;margin:0 0.26px 0 -0.26px">Maximum</i> <i style="letter-spacing:-0.35px;margin:0 0.18px 0 -0.18px">Number</i> <i style="letter-spacing:0.41px;margin:0 -0.20px 0 0.20px">of</i> <i style="letter-spacing:0.11px;margin:0 -0.05px 0 0.05px">Stat</i><i style="letter-spacing:0.61px;margin:0 -0.30px 0 0.30px">...</i></span>
<span style="left:705.4px;top:119px;"><i style="letter-spacing:-0.12px;margin:0 0.06px 0 -0.06px">100</i></span>
<div style="left:568px;top:137px;width:399px;height:18px;background:#fff"></div>
<div style="left:568px;top:154px;width:399px;height:1px;background:#eeeeee"></div>
<div style="left:704px;top:137px;width:1px;height:18px;background:#e6e6e6"></div>
<span style="left:567.6px;top:138px;"><i style="letter-spacing:-0.38px;margin:0 0.19px 0 -0.19px">Enable</i> <i style="letter-spacing:-1.01px;margin:0 0.50px 0 -0.50px">SQL</i> <i style="letter-spacing:-0.03px;margin:0 0.02px 0 -0.02px">History</i> <i style="letter-spacing:-0.09px;margin:0 0.05px 0 -0.05px">Archiv</i><i style="letter-spacing:0.61px;margin:0 -0.30px 0 0.30px">...</i></span>
<div style="left:705px;top:139px;width:13px;height:13px;background:#fff;border:1px solid #707070;box-sizing:border-box"></div>
<div style="left:568px;top:155px;width:399px;height:18px;background:#f7f8ec"></div>
<div style="left:568px;top:172px;width:399px;height:1px;background:#eeeeee"></div>
<div style="left:704px;top:155px;width:1px;height:18px;background:#e6e6e6"></div>
<span style="left:567.6px;top:156px;"><i style="letter-spacing:-0.52px;margin:0 0.26px 0 -0.26px">Maximum</i> <i style="letter-spacing:-0.35px;margin:0 0.18px 0 -0.18px">Number</i> <i style="letter-spacing:0.41px;margin:0 -0.20px 0 0.20px">of</i> <i style="letter-spacing:-0.12px;margin:0 0.06px 0 -0.06px">Entri</i><i style="letter-spacing:0.61px;margin:0 -0.30px 0 0.30px">...</i></span>
<span style="left:705.4px;top:155px;"><i style="letter-spacing:0.11px;margin:0 -0.05px 0 0.05px">-1</i></span>
<div style="left:568px;top:173px;width:399px;height:18px;background:#fff"></div>
<div style="left:568px;top:190px;width:399px;height:1px;background:#eeeeee"></div>
<div style="left:704px;top:173px;width:1px;height:18px;background:#e6e6e6"></div>
<span style="left:567.6px;top:174px;"><i style="letter-spacing:-0.10px;margin:0 0.05px 0 -0.05px">Archive</i> <i style="letter-spacing:-0.28px;margin:0 0.14px 0 -0.14px">Cleanup</i> <i style="letter-spacing:-0.30px;margin:0 0.15px 0 -0.15px">Period</i> <i style="letter-spacing:0.33px;margin:0 -0.16px 0 0.16px">(</i><i style="letter-spacing:0.61px;margin:0 -0.30px 0 0.30px">...</i></span>
<span style="left:705.4px;top:173px;"><i style="letter-spacing:0.11px;margin:0 -0.05px 0 0.05px">-1</i></span>
<div style="left:568px;top:191px;width:399px;height:18px;background:#f7f8ec"></div>
<div style="left:568px;top:208px;width:399px;height:1px;background:#eeeeee"></div>
<div style="left:704px;top:191px;width:1px;height:18px;background:#e6e6e6"></div>
<span style="left:567.6px;top:192px;"><i style="letter-spacing:-0.38px;margin:0 0.19px 0 -0.19px">Enable</i> <i style="letter-spacing:-0.06px;margin:0 0.03px 0 -0.03px">Table</i> <i style="letter-spacing:-0.06px;margin:0 0.03px 0 -0.03px">Data</i> <i style="letter-spacing:-0.12px;margin:0 0.06px 0 -0.06px">Editor</i> <i style="letter-spacing:0.61px;margin:0 -0.30px 0 0.30px">...</i></span>
<div style="left:705px;top:193px;width:13px;height:13px;background:#fff;border:1px solid #707070;box-sizing:border-box"></div>
<div style="left:568px;top:209px;width:399px;height:18px;background:#fff"></div>
<div style="left:568px;top:226px;width:399px;height:1px;background:#eeeeee"></div>
<div style="left:704px;top:209px;width:1px;height:18px;background:#e6e6e6"></div>
<span style="left:567.6px;top:210px;"><i style="letter-spacing:-0.38px;margin:0 0.19px 0 -0.19px">Enable</i> <i style="letter-spacing:-0.46px;margin:0 0.23px 0 -0.23px">Visual</i> <i style="letter-spacing:-0.23px;margin:0 0.12px 0 -0.12px">Editing</i> <i style="letter-spacing:-1.01px;margin:0 0.50px 0 -0.50px">SQL</i> <i style="letter-spacing:0.61px;margin:0 -0.30px 0 0.30px">...</i></span>
<div style="left:705px;top:211px;width:13px;height:13px;background:#fff;border:1px solid #707070;box-sizing:border-box"></div>
<div style="left:568px;top:227px;width:399px;height:18px;background:#f7f8ec"></div>
<div style="left:568px;top:244px;width:399px;height:1px;background:#eeeeee"></div>
<div style="left:704px;top:227px;width:1px;height:18px;background:#e6e6e6"></div>
<span style="left:567.6px;top:228px;"><i style="letter-spacing:-0.15px;margin:0 0.08px 0 -0.08px">Specify</i> <i style="letter-spacing:-0.03px;margin:0 0.02px 0 -0.02px">History</i> <i style="letter-spacing:0;margin:0 0.00px 0 -0.00px">Directory</i></span>
<span style="left:705.4px;top:227px;"><i style="letter-spacing:0;margin:0 -0.00px 0 0.00px">C:</i><i style="letter-spacing:-0.13px;margin:0 0.07px 0 -0.07px">\Users</i><i style="letter-spacing:0.10px;margin:0 -0.05px 0 0.05px">\aquadataserver</i><i style="letter-spacing:0.09px;margin:0 -0.05px 0 0.05px">\.datastudio</i><i style="letter-spacing:0.19px;margin:0 -0.10px 0 0.10px">\history</i></span>
<div style="left:568px;top:245px;width:399px;height:18px;background:#fff"></div>
<div style="left:568px;top:262px;width:399px;height:1px;background:#eeeeee"></div>
<div style="left:704px;top:245px;width:1px;height:18px;background:#e6e6e6"></div>
<div style="left:568px;top:245px;width:136px;height:17px;background:#c0cfe6"></div>
<span style="left:567.6px;top:246px;"><i style="letter-spacing:-0.15px;margin:0 0.08px 0 -0.08px">Specify</i> <i style="letter-spacing:-0.10px;margin:0 0.05px 0 -0.05px">Archive</i> <i style="letter-spacing:0;margin:0 0.00px 0 -0.00px">Directory</i></span>
<span style="left:705.4px;top:245px;"><i style="letter-spacing:0;margin:0 -0.00px 0 0.00px">C:</i><i style="letter-spacing:-0.13px;margin:0 0.07px 0 -0.07px">\Users</i><i style="letter-spacing:0.10px;margin:0 -0.05px 0 0.05px">\aquadataserver</i><i style="letter-spacing:0.09px;margin:0 -0.05px 0 0.05px">\.datastudio</i><i style="letter-spacing:0.19px;margin:0 -0.10px 0 0.10px">\history</i><i style="letter-spacing:0.06px;margin:0 -0.03px 0 0.03px">\archive</i></span>
<div style="left:553px;top:277px;width:415px;height:36px;background:#f0f0f0;border:1px solid #d4d4d4;box-sizing:border-box"></div>
<span class="b" style="left:554.4px;top:277px;"><i style="letter-spacing:0.27px;margin:0 -0.13px 0 0.13px">Specify</i> <i style="letter-spacing:0.38px;margin:0 -0.19px 0 0.19px">Archive</i> <i style="letter-spacing:0.52px;margin:0 -0.26px 0 0.26px">Directory</i></span>
<span style="left:554px;top:293px;"><i style="letter-spacing:-0.23px;margin:0 0.11px 0 -0.11px">Determines</i> <i style="letter-spacing:-0.28px;margin:0 0.14px 0 -0.14px">in</i> <i style="letter-spacing:0.19px;margin:0 -0.09px 0 0.09px">what</i> <i style="letter-spacing:0.09px;margin:0 -0.05px 0 0.05px">directory</i> <i style="letter-spacing:-0.07px;margin:0 0.04px 0 -0.04px">archived</i> <i style="letter-spacing:-1.01px;margin:0 0.50px 0 -0.50px">SQL</i> <i style="letter-spacing:-0.03px;margin:0 0.02px 0 -0.02px">History</i> <i style="letter-spacing:-0.32px;margin:0 0.16px 0 -0.16px">will</i> <i style="letter-spacing:-0.12px;margin:0 0.06px 0 -0.06px">be</i> <i style="letter-spacing:-0.07px;margin:0 0.04px 0 -0.04px">saved</i></span>
<div style="left:829px;top:346px;width:67px;height:21px;background:linear-gradient(#f4f4f4,#f0f0f0 45%,#e2e5e9);border:1px solid #3399ff;box-sizing:border-box"></div>
<div style="left:903px;top:346px;width:67px;height:21px;background:linear-gradient(#f4f4f4,#f0f0f0 45%,#e2e5e9);border:1px solid #8e9db4;box-sizing:border-box"></div>
<span style="left:854.8px;top:348px;"><i style="letter-spacing:-0.95px;margin:0 0.48px 0 -0.48px">OK</i></span>
<span style="left:919.8px;top:348px;"><i style="letter-spacing:-0.38px;margin:0 0.19px 0 -0.19px">Cancel</i></span>
</div></body></html>
